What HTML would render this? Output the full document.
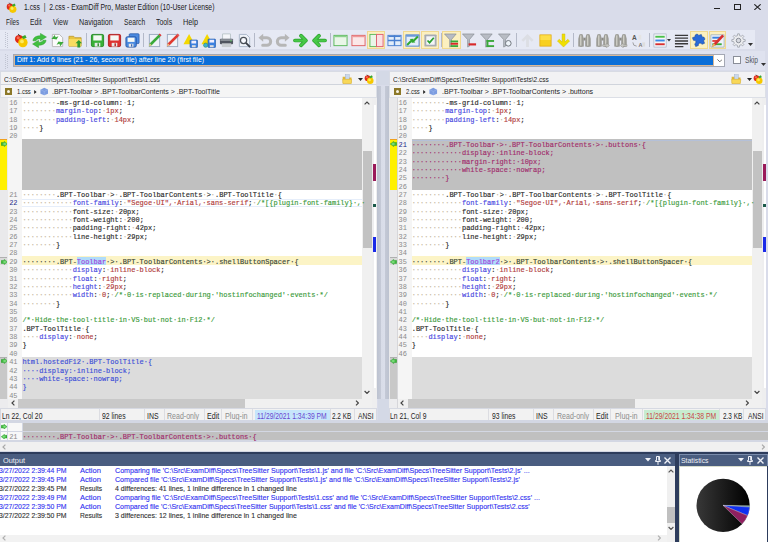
<!DOCTYPE html><html><head><meta charset="utf-8"><style>
*{margin:0;padding:0;box-sizing:border-box}
html,body{width:768px;height:542px;overflow:hidden;background:#d9dcea;position:relative;font-family:"Liberation Sans",sans-serif}
div,span,svg{position:absolute}
span,b,i{position:static}
.t{white-space:nowrap;color:#1e1e1e}
.cl{font-family:"Liberation Mono",monospace;font-size:6.975px;line-height:8.360px;white-space:pre;height:8.360px;margin-top:1.4px;-webkit-text-stroke:0.15px currentColor}
.cl i{font-style:normal;color:#c4b498}
.cl b{font-weight:normal}
.ih{background:#b0dcfa;display:inline-block;height:8.8px;vertical-align:top;margin-top:-1.2px;padding-top:1.2px}
.ln{font-family:"Liberation Mono",monospace;font-size:6.975px;line-height:8.360px;white-space:pre;margin-top:1.4px}
</style></head><body><svg style="left:5.50px;top:2.20px" width="11.50" height="11.50" viewBox="0 0 16 16"><circle cx="5.5" cy="6.5" r="4.5" fill="#e02a18"/><circle cx="4.5" cy="5" r="1.6" fill="#ff8a70" opacity=".7"/><circle cx="9.5" cy="10.2" r="5" fill="#f6c800"/><circle cx="8.5" cy="9" r="2" fill="#fff27a" opacity=".8"/><path d="M8 4 L12 2 L13.5 5 L10 6.5Z" fill="#3aa82a"/><path d="M4.5 1 L6 3" stroke="#333" stroke-width="1"/></svg>
<div class="t" style="left:24.30px;top:2.87px;font-size:8.40px;line-height:9.66px;color:#1a1a1a;transform:scaleX(0.8128);transform-origin:0 0;">1.css &nbsp;|&nbsp; 2.css - ExamDiff Pro, Master Edition (10-User License)</div>
<div style="left:714.20px;top:7.60px;width:5.80px;height:1.10px;background:#222;"></div>
<div style="left:734.3px;top:4px;width:6.6px;height:5.8px;border:1px solid #222;border-top-width:1.6px"></div>
<svg style="left:754.2px;top:3.8px" width="7" height="6.2" viewBox="0 0 7 6.2"><path d="M0.3 0.3 L6.7 5.9 M6.7 0.3 L0.3 5.9" stroke="#222" stroke-width="1.1"/></svg>
<div class="t" style="left:5.90px;top:18.11px;font-size:8.20px;line-height:9.43px;color:#1e1e1e;transform:scaleX(0.7571);transform-origin:0 0;">Files</div>
<div class="t" style="left:30.20px;top:18.11px;font-size:8.20px;line-height:9.43px;color:#1e1e1e;transform:scaleX(0.8271);transform-origin:0 0;">Edit</div>
<div class="t" style="left:53.00px;top:18.11px;font-size:8.20px;line-height:9.43px;color:#1e1e1e;transform:scaleX(0.8508);transform-origin:0 0;">View</div>
<div class="t" style="left:79.00px;top:18.11px;font-size:8.20px;line-height:9.43px;color:#1e1e1e;transform:scaleX(0.8724);transform-origin:0 0;">Navigation</div>
<div class="t" style="left:123.70px;top:18.11px;font-size:8.20px;line-height:9.43px;color:#1e1e1e;transform:scaleX(0.8156);transform-origin:0 0;">Search</div>
<div class="t" style="left:155.90px;top:18.11px;font-size:8.20px;line-height:9.43px;color:#1e1e1e;transform:scaleX(0.8409);transform-origin:0 0;">Tools</div>
<div class="t" style="left:183.00px;top:18.11px;font-size:8.20px;line-height:9.43px;color:#1e1e1e;transform:scaleX(0.8902);transform-origin:0 0;">Help</div>
<div style="left:0.00px;top:30.00px;width:755.00px;height:19.00px;background:#e6e9f4;"></div>
<svg style="left:4.60px;top:32.00px" width="4" height="16" fill="#c0c4d2"><rect x="0" y="0" width="1" height="1"/><rect x="2" y="1" width="1" height="1"/><rect x="0" y="2" width="1" height="1"/><rect x="2" y="3" width="1" height="1"/><rect x="0" y="4" width="1" height="1"/><rect x="2" y="5" width="1" height="1"/><rect x="0" y="6" width="1" height="1"/><rect x="2" y="7" width="1" height="1"/><rect x="0" y="8" width="1" height="1"/><rect x="2" y="9" width="1" height="1"/><rect x="0" y="10" width="1" height="1"/><rect x="2" y="11" width="1" height="1"/><rect x="0" y="12" width="1" height="1"/><rect x="2" y="13" width="1" height="1"/><rect x="0" y="14" width="1" height="1"/><rect x="2" y="15" width="1" height="1"/></svg>
<div style="left:367.10px;top:31px;width:18.30px;height:17.5px;background:#fcf0c0;border:1px solid #f0d890"></div>
<div style="left:403.20px;top:31px;width:17.00px;height:17.5px;background:#fcf0c0;border:1px solid #f0d890"></div>
<div style="left:420.70px;top:31px;width:18.10px;height:17.5px;background:#fcf0c0;border:1px solid #f0d890"></div>
<div style="left:442.20px;top:31px;width:18.60px;height:17.5px;background:#fcf0c0;border:1px solid #f0d890"></div>
<div style="left:690.00px;top:31px;width:17.70px;height:17.5px;background:#fcf0c0;border:1px solid #f0d890"></div>
<div style="left:708.70px;top:31px;width:17.60px;height:17.5px;background:#fcf0c0;border:1px solid #f0d890"></div>
<svg style="left:13.90px;top:32.60px" width="15.00" height="15.00" viewBox="0 0 16 16"><circle cx="5.5" cy="6.5" r="4.5" fill="#e02a18"/><circle cx="4.5" cy="5" r="1.6" fill="#ff8a70" opacity=".7"/><circle cx="9.5" cy="10.2" r="5" fill="#f6c800"/><circle cx="8.5" cy="9" r="2" fill="#fff27a" opacity=".8"/><path d="M8 4 L12 2 L13.5 5 L10 6.5Z" fill="#3aa82a"/><path d="M4.5 1 L6 3" stroke="#333" stroke-width="1"/></svg>
<svg style="left:32.20px;top:32.60px" width="15.00" height="15.00" viewBox="0 0 16 16"><g fill="#40c040" stroke="#2a9a2a" stroke-width=".5" stroke-linejoin="round"><path d="M1 8.3 C1.5 4.8 4 3 9 3 L9 0.4 L15.4 4.3 L9 8.2 L9 6 C6.3 6 4.8 6.8 4.2 8.3 Z"/><path d="M15 7.7 C14.5 11.2 12 13 7 13 L7 15.6 L0.6 11.7 L7 7.8 L7 10 C9.7 10 11.2 9.2 11.8 7.7 Z"/></g></svg>
<svg style="left:50.20px;top:32.60px" width="15.00" height="15.00" viewBox="0 0 16 16"><path d="M2.5 1.5 H10 L13.5 5 V14.5 H2.5Z" fill="#fbfbfb" stroke="#b8b8b8"/><path d="M1.5 6.5 L5 2 L6 4.5 L9 3.5 L7 7 L4 6.5Z" fill="#3caa3c"/><path d="M14.5 9.5 L11 14 L10 11.5 L7 12.5 L9 9 L12 9.5Z" fill="#3caa3c"/></svg>
<svg style="left:67.80px;top:32.60px" width="15.00" height="15.00" viewBox="0 0 16 16"><path d="M1 3.5 H6 L7.5 5 H14 V14 H1Z" fill="#e8c440" stroke="#b8942a" stroke-width=".8"/><path d="M1 6.5 H14 V14 H1Z" fill="#f8dc60"/><path d="M11.5 7.5 L15 11 H13 V15.5 H10 V11 H8Z" fill="#2e9a2e"/></svg>
<svg style="left:89.60px;top:32.60px" width="15.00" height="15.00" viewBox="0 0 16 16"><rect x="1.5" y="1.5" width="13" height="13" rx="1.5" fill="#38b038" stroke="#2a8a2a" stroke-width="1"/><rect x="3.5" y="2.5" width="9" height="5.5" fill="#f4f8f4"/><rect x="5" y="10.5" width="6" height="4" fill="#e8e8e8"/><rect x="8" y="11" width="1.5" height="3" fill="#2a8a2a"/></svg>
<svg style="left:107.30px;top:32.60px" width="15.00" height="15.00" viewBox="0 0 16 16"><rect x="1.5" y="1.5" width="13" height="13" rx="1.5" fill="#dd3030" stroke="#b02020" stroke-width="1"/><rect x="3.5" y="2.5" width="9" height="5.5" fill="#f4f8f4"/><rect x="5" y="10.5" width="6" height="4" fill="#e8e8e8"/><rect x="8" y="11" width="1.5" height="3" fill="#b02020"/></svg>
<svg style="left:124.50px;top:32.60px" width="15.00" height="15.00" viewBox="0 0 16 16"><rect x="4.5" y="0.8" width="10.5" height="10.5" rx="1" fill="#4a8ae0" stroke="#2a5aa8" stroke-width=".8"/><rect x="1" y="4" width="11" height="11" rx="1.5" fill="#4a8ae0" stroke="#2a5aa8" stroke-width="1"/><rect x="2.8" y="5" width="7.4" height="4.5" fill="#f4f8f4"/><rect x="4" y="11.5" width="5" height="3.2" fill="#e8e8e8"/><rect x="6.5" y="12" width="1.2" height="2.5" fill="#2a5aa8"/></svg>
<svg style="left:146.50px;top:32.60px" width="15.00" height="15.00" viewBox="0 0 16 16"><rect x="2.5" y="1.5" width="11" height="13" fill="#eef2f8" stroke="#9aaac0"/><path d="M2 14.5 L3 11 L12.5 1.5 L14.5 3.5 L5 13Z" fill="#3aaa3a"/><path d="M12.5 1.5 L14.5 3.5 L15.5 2.5 L13.5 0.5Z" fill="#e03030"/><path d="M2 14.5 L3 11 L5 13Z" fill="#e8c890"/></svg>
<svg style="left:164.50px;top:32.60px" width="15.00" height="15.00" viewBox="0 0 16 16"><rect x="2.5" y="1.5" width="11" height="13" fill="#eef2f8" stroke="#9aaac0"/><path d="M2 14.5 L3 11 L12.5 1.5 L14.5 3.5 L5 13Z" fill="#e03a30"/><path d="M12.5 1.5 L14.5 3.5 L15.5 2.5 L13.5 0.5Z" fill="#e85050"/><path d="M2 14.5 L3 11 L5 13Z" fill="#e8c890"/></svg>
<svg style="left:183.00px;top:32.60px" width="15.00" height="15.00" viewBox="0 0 16 16"><path d="M6.5 1 L12.5 12 H0.5Z" fill="#f4d800"/><rect x="7.5" y="7.5" width="8" height="8" rx=".8" fill="#3a80e0" stroke="#2458a8" stroke-width=".7"/><rect x="9" y="8.2" width="5" height="3" fill="#eef"/><rect x="9.5" y="13" width="4" height="2.2" fill="#ddd"/></svg>
<svg style="left:201.20px;top:32.60px" width="15.00" height="15.00" viewBox="0 0 16 16"><path d="M6.5 1 L12.5 12 H0.5Z" fill="#f4d800"/><rect x="7.5" y="6.5" width="8" height="9" rx=".8" fill="#3a80e0" stroke="#2458a8" stroke-width=".7"/><rect x="9" y="7.2" width="5" height="3" fill="#eef"/><rect x="9.5" y="13" width="4" height="2.2" fill="#ddd"/><circle cx="5" cy="13" r="2.3" fill="#3cb0d8" stroke="#2a8a50" stroke-width=".6"/></svg>
<svg style="left:218.60px;top:32.60px" width="15.00" height="15.00" viewBox="0 0 16 16"><rect x="4" y="1" width="8" height="6" fill="#f4f6fa" stroke="#9aa" stroke-width=".6"/><rect x="1" y="6" width="14" height="6" rx="1" fill="#505560"/><rect x="1.5" y="6.5" width="13" height="2" fill="#8a9098"/><rect x="3" y="11" width="10" height="4" fill="#c8ccd0"/><rect x="12" y="8" width="1.5" height="1" fill="#4c4"/></svg>
<svg style="left:237.00px;top:32.60px" width="15.00" height="15.00" viewBox="0 0 16 16"><path d="M2.5 1.5 H10 L13.5 5 V14.5 H2.5Z" fill="#eef2f8" stroke="#a8b4c8"/><circle cx="7" cy="8" r="3.3" fill="#f8faff" stroke="#4a5058" stroke-width="1.3"/><path d="M9.5 10.5 L14 15" stroke="#3a3f48" stroke-width="2"/></svg>
<svg style="left:257.80px;top:32.60px" width="15.00" height="15.00" viewBox="0 0 16 16"><path d="M4 5 H9.5 A4 4 0 0 1 9.5 13 H5" fill="none" stroke="#b6b6b6" stroke-width="3.2" stroke-linecap="round"/><path d="M0.5 5 L5.5 0.8 V9.2Z" fill="#b6b6b6"/></svg>
<svg style="left:275.20px;top:32.60px" width="15.00" height="15.00" viewBox="0 0 16 16"><path d="M12 5 H6.5 A4 4 0 0 0 6.5 13 H11" fill="none" stroke="#b6b6b6" stroke-width="3.2" stroke-linecap="round"/><path d="M15.5 5 L10.5 0.8 V9.2Z" fill="#b6b6b6"/></svg>
<svg style="left:293.00px;top:32.60px" width="15.00" height="15.00" viewBox="0 0 16 16"><g fill="none" stroke-linecap="round" stroke-linejoin="round"><path d="M2 8 H13.5 M8.5 2.8 L13.8 8 L8.5 13.2" stroke="#28a028" stroke-width="3.8"/><path d="M2 8 H13.5 M8.5 2.8 L13.8 8 L8.5 13.2" stroke="#48c848" stroke-width="2.4"/></g></svg>
<svg style="left:311.60px;top:32.60px" width="15.00" height="15.00" viewBox="0 0 16 16"><g fill="none" stroke-linecap="round" stroke-linejoin="round"><path d="M14 8 H2.5 M7.5 2.8 L2.2 8 L7.5 13.2" stroke="#28a028" stroke-width="3.8"/><path d="M14 8 H2.5 M7.5 2.8 L2.2 8 L7.5 13.2" stroke="#48c848" stroke-width="2.4"/></g></svg>
<svg style="left:332.80px;top:32.60px" width="15.00" height="15.00" viewBox="0 0 16 16"><rect x="1" y="2.5" width="14" height="11" fill="#eaf6e8" stroke="#58b858" stroke-width="1"/><rect x="1.5" y="3" width="13" height="1.5" fill="#8cd08c"/></svg>
<svg style="left:351.00px;top:32.60px" width="15.00" height="15.00" viewBox="0 0 16 16"><rect x="1" y="2.5" width="14" height="11" fill="#fbe8e8" stroke="#e06060" stroke-width="1"/><rect x="1.5" y="3" width="13" height="1.5" fill="#ee9a9a"/></svg>
<svg style="left:368.80px;top:32.60px" width="15.00" height="15.00" viewBox="0 0 16 16"><rect x="1" y="1.5" width="7" height="13" fill="#eaf6e8" stroke="#58b858"/><rect x="8" y="1.5" width="7" height="13" fill="#fbe0e4" stroke="#e06070"/></svg>
<svg style="left:386.60px;top:32.60px" width="15.00" height="15.00" viewBox="0 0 16 16"><rect x="1" y="2.5" width="14" height="11" fill="#e4eefa" stroke="#4a80d0"/><path d="M1 8 H15 M8 2.5 V13.5" stroke="#4a80d0" stroke-width="1.5"/><rect x="1.5" y="3" width="13" height="1.3" fill="#4a80d0"/></svg>
<svg style="left:404.50px;top:32.60px" width="15.00" height="15.00" viewBox="0 0 16 16"><rect x="1" y="2" width="14" height="12" fill="#e4eefa" stroke="#4a80d0"/><rect x="1.5" y="2.5" width="13" height="1.3" fill="#4a80d0"/><path d="M1.5 12 L6 7.5 L5 6.5 L9 6 L8.5 10 L7.5 9 L3 13.5Z" fill="#30a830"/><path d="M14.5 4.5 L10 9 L11 10 L7 10.5 L7.5 6.5 L8.5 7.5 L13 3Z" fill="#30a830"/></svg>
<svg style="left:422.50px;top:32.60px" width="15.00" height="15.00" viewBox="0 0 16 16"><rect x="1.5" y="1.5" width="13" height="13" rx="1" fill="#a8acb4"/><rect x="3.5" y="3.5" width="9" height="9" fill="#f4f6f8"/><path d="M4.8 8 L7 10.3 L11.5 5" fill="none" stroke="#2aa030" stroke-width="1.8"/></svg>
<svg style="left:444.00px;top:32.60px" width="15.00" height="15.00" viewBox="0 0 16 16"><path d="M0.5 1 H13 L8 7 V14 L6 15 V7Z" fill="#b8bcc4" stroke="#7a8088" stroke-width=".6"/><rect x="7" y="8" width="8" height="2" fill="#3aa83a"/><rect x="7" y="10.5" width="8" height="2" fill="#d82a2a"/><rect x="7" y="13" width="8" height="2" fill="#3aa83a"/></svg>
<svg style="left:462.30px;top:32.60px" width="15.00" height="15.00" viewBox="0 0 16 16"><path d="M0.5 1 H13 L8 7 V14 L6 15 V7Z" fill="#b8bcc4" stroke="#7a8088" stroke-width=".6"/><rect x="7" y="11" width="8" height="2.3" fill="#d82a2a"/></svg>
<svg style="left:480.30px;top:32.60px" width="15.00" height="15.00" viewBox="0 0 16 16"><path d="M0.5 1 H13 L8 7 V14 L6 15 V7Z" fill="#b8bcc4" stroke="#7a8088" stroke-width=".6"/><rect x="7" y="7.5" width="8" height="2" fill="#3aa83a"/><rect x="7" y="13" width="8" height="2" fill="#3aa83a"/><rect x="7" y="7.5" width="2" height="7.5" fill="#3aa83a"/></svg>
<svg style="left:497.80px;top:32.60px" width="15.00" height="15.00" viewBox="0 0 16 16"><path d="M0.5 1 H13 L8 7 V14 L6 15 V7Z" fill="#b8bcc4" stroke="#7a8088" stroke-width=".6"/><circle cx="11" cy="11" r="3" fill="#eef4fa" stroke="#6a7078" stroke-width="1"/></svg>
<svg style="left:519.70px;top:32.60px" width="15.00" height="15.00" viewBox="0 0 16 16"><path d="M8 1 L14.5 7.5 L12.5 9.3 L9.5 6.3 V15 H6.5 V6.3 L3.5 9.3 L1.5 7.5Z" fill="#dcdee4"/></svg>
<svg style="left:537.50px;top:32.60px" width="15.00" height="15.00" viewBox="0 0 16 16"><rect x="2" y="2" width="12" height="12" fill="#f8d020" stroke="#e0a810" stroke-width=".8"/><rect x="2.5" y="2.5" width="11" height="5" fill="#ffe45a" opacity=".7"/></svg>
<svg style="left:555.70px;top:32.60px" width="15.00" height="15.00" viewBox="0 0 16 16"><path d="M8 15 L14.5 8.5 L12.5 6.7 L9.5 9.7 V1 H6.5 V9.7 L3.5 6.7 L1.5 8.5Z" fill="#f0e000" stroke="#d0b800" stroke-width=".5"/></svg>
<svg style="left:576.80px;top:32.60px" width="15.00" height="15.00" viewBox="0 0 16 16"><path d="M2.5 1.5 Q4.3 0.8 6.1 1.5 L7.2 6 L7.3 14.5 Q4.3 15.3 1.3 14.5 L1.4 6Z" fill="#9c9c96"/><rect x="3.4" y="2.5" width="1.3" height="11" fill="#dcdcd4" opacity=".9"/><path d="M9.9 1.5 Q11.7 0.8 13.5 1.5 L14.6 6 L14.7 14.5 Q11.7 15.3 8.7 14.5 L8.8 6Z" fill="#9c9c96"/><rect x="10.8" y="2.5" width="1.3" height="11" fill="#dcdcd4" opacity=".9"/><rect x="7" y="5" width="2" height="3" fill="#8c8c86"/></svg>
<svg style="left:594.80px;top:32.60px" width="15.00" height="15.00" viewBox="0 0 16 16"><path d="M2.5 1.5 Q4.3 0.8 6.1 1.5 L7.2 6 L7.3 14.5 Q4.3 15.3 1.3 14.5 L1.4 6Z" fill="#9c9c96"/><rect x="3.4" y="2.5" width="1.3" height="11" fill="#dcdcd4" opacity=".9"/><path d="M9.9 1.5 Q11.7 0.8 13.5 1.5 L14.6 6 L14.7 14.5 Q11.7 15.3 8.7 14.5 L8.8 6Z" fill="#9c9c96"/><rect x="10.8" y="2.5" width="1.3" height="11" fill="#dcdcd4" opacity=".9"/><rect x="7" y="5" width="2" height="3" fill="#8c8c86"/><path d="M8 12.5 H12 V10.8 L15.5 13.3 L12 15.8 V14.1 H8Z" fill="#c8c8c4" stroke="#8a8a84" stroke-width=".4"/></svg>
<svg style="left:612.70px;top:32.60px" width="15.00" height="15.00" viewBox="0 0 16 16"><path d="M2.5 1.5 Q4.3 0.8 6.1 1.5 L7.2 6 L7.3 14.5 Q4.3 15.3 1.3 14.5 L1.4 6Z" fill="#9c9c96"/><rect x="3.4" y="2.5" width="1.3" height="11" fill="#dcdcd4" opacity=".9"/><path d="M9.9 1.5 Q11.7 0.8 13.5 1.5 L14.6 6 L14.7 14.5 Q11.7 15.3 8.7 14.5 L8.8 6Z" fill="#9c9c96"/><rect x="10.8" y="2.5" width="1.3" height="11" fill="#dcdcd4" opacity=".9"/><rect x="7" y="5" width="2" height="3" fill="#8c8c86"/><path d="M15 12.5 H11 V10.8 L7.5 13.3 L11 15.8 V14.1 H15Z" fill="#c8c8c4" stroke="#8a8a84" stroke-width=".4"/></svg>
<svg style="left:630.60px;top:32.60px" width="15.00" height="15.00" viewBox="0 0 16 16"><text x="1" y="7" font-family="Liberation Sans" font-size="7" font-weight="bold" fill="#555">A</text><text x="8" y="14.5" font-family="Liberation Sans" font-size="6" font-weight="bold" fill="#777">A</text><rect x="12" y="10" width="3" height="4.5" fill="#ddd"/><rect x="8" y="2" width="3" height="5" fill="#e4e4e4"/><path d="M2 10 A4 4 0 0 0 6 14" fill="none" stroke="#888" stroke-width=".8"/></svg>
<svg style="left:652.50px;top:32.60px" width="15.00" height="15.00" viewBox="0 0 16 16"><rect x="1" y="1" width="13" height="14" fill="#f4f6fa" stroke="#98a4b8" stroke-width=".6"/><rect x="2.5" y="3" width="10" height="2" fill="#4ac04a"/><rect x="2.5" y="7" width="10" height="2" fill="#3a8ae8"/><rect x="2.5" y="11" width="10" height="2" fill="#d83030"/></svg>
<svg style="left:673.70px;top:32.60px" width="15.00" height="15.00" viewBox="0 0 16 16"><path d="M1 2.5 H15 M1 5.5 H15 M1 8.5 H15 M1 11.5 H15 M1 14.5 H10" stroke="#3a3a3a" stroke-width="1.5"/></svg>
<svg style="left:691.40px;top:32.60px" width="15.00" height="15.00" viewBox="0 0 16 16"><path d="M3 3 H6 A2 2 0 1 1 10 3 H13 V6 A2 2 0 1 1 13 10 V13 H10 A2 2 0 1 0 6 13 H3 V10 A2 2 0 1 0 3 6Z" fill="#2a6ad8" stroke="#1a4aa0" stroke-width=".6" transform="rotate(-20 8 8)"/></svg>
<svg style="left:709.80px;top:32.60px" width="15.00" height="15.00" viewBox="0 0 16 16"><rect x="1" y="2" width="14" height="13" fill="#eef2fa" stroke="#7890b0" stroke-width=".6"/><rect x="2.5" y="4" width="9" height="2" fill="#3a80e0"/><rect x="2.5" y="7.5" width="7" height="2" fill="#e04040"/><rect x="2.5" y="11" width="10" height="2" fill="#3aaa3a"/><path d="M2 15 L4 11 L13 1.5 L15 3.5 L6 13Z" fill="#d83030"/><path d="M1.5 15.5 L4 11 L6 13Z" fill="#e8b860"/></svg>
<svg style="left:731.00px;top:32.60px" width="15.00" height="15.00" viewBox="0 0 16 16"><path d="M13.17 6.84 L15.14 7.07 L15.14 8.93 L13.17 9.16 L12.48 10.84 L13.71 12.39 L12.39 13.71 L10.84 12.48 L9.16 13.17 L8.93 15.14 L7.07 15.14 L6.84 13.17 L5.16 12.48 L3.61 13.71 L2.29 12.39 L3.52 10.84 L2.83 9.16 L0.86 8.93 L0.86 7.07 L2.83 6.84 L3.52 5.16 L2.29 3.61 L3.61 2.29 L5.16 3.52 L6.84 2.83 L7.07 0.86 L8.93 0.86 L9.16 2.83 L10.84 3.52 L12.39 2.29 L13.71 3.61 L12.48 5.16Z" fill="#ebecef" stroke="#8e939c" stroke-width=".7" stroke-linejoin="round"/><circle cx="8" cy="8" r="2.4" fill="#d8dae0" stroke="#7a7f88" stroke-width=".9"/></svg>
<div style="left:85.60px;top:33.00px;width:1.00px;height:14.00px;background:#b4b9c8;"></div>
<div style="left:142.90px;top:33.00px;width:1.00px;height:14.00px;background:#b4b9c8;"></div>
<div style="left:254.00px;top:33.00px;width:1.00px;height:14.00px;background:#b4b9c8;"></div>
<div style="left:329.50px;top:33.00px;width:1.00px;height:14.00px;background:#b4b9c8;"></div>
<div style="left:440.50px;top:33.00px;width:1.00px;height:14.00px;background:#b4b9c8;"></div>
<div style="left:515.60px;top:33.00px;width:1.00px;height:14.00px;background:#b4b9c8;"></div>
<div style="left:572.90px;top:33.00px;width:1.00px;height:14.00px;background:#b4b9c8;"></div>
<div style="left:649.00px;top:33.00px;width:1.00px;height:14.00px;background:#b4b9c8;"></div>
<svg style="left:666.6px;top:38.5px" width="4" height="3"><path d="M0 0 H4 L2 2.5Z" fill="#333"/></svg>
<svg style="left:748.4px;top:43px" width="5" height="3"><path d="M0 0 H5 L2.5 3Z" fill="#333"/></svg>
<div style="left:0.00px;top:50.70px;width:765.30px;height:19.30px;background:#dfe2ef;"></div>
<svg style="left:4.60px;top:54.00px" width="4" height="15" fill="#c0c4d2"><rect x="0" y="0" width="1" height="1"/><rect x="2" y="1" width="1" height="1"/><rect x="0" y="2" width="1" height="1"/><rect x="2" y="3" width="1" height="1"/><rect x="0" y="4" width="1" height="1"/><rect x="2" y="5" width="1" height="1"/><rect x="0" y="6" width="1" height="1"/><rect x="2" y="7" width="1" height="1"/><rect x="0" y="8" width="1" height="1"/><rect x="2" y="9" width="1" height="1"/><rect x="0" y="10" width="1" height="1"/><rect x="2" y="11" width="1" height="1"/><rect x="0" y="12" width="1" height="1"/><rect x="2" y="13" width="1" height="1"/><rect x="0" y="14" width="1" height="1"/></svg>
<div style="left:12.5px;top:53.5px;width:712px;height:13px;background:#fff;border:1px solid #a4a8b4"></div>
<div style="left:13.5px;top:54.5px;width:700px;height:11.2px;background:#0a6ed8;border:1px solid #d8b898"></div>
<div class="t" style="left:16.80px;top:56.40px;font-size:7.80px;line-height:8.97px;color:#ffffff;transform:scaleX(0.8964);transform-origin:0 0;">Diff 1: Add 6 lines (21 - 26, second file) after line 20 (first file)</div>
<svg style="left:716.6px;top:58.8px" width="5.6" height="3.4"><path d="M0.4 0.4 L2.8 2.8 L5.2 0.4" fill="none" stroke="#606060" stroke-width=".9"/></svg>
<div style="left:733.1px;top:56.4px;width:8px;height:7.2px;background:#fff;border:1px solid #8a8e98"></div>
<div class="t" style="left:744.80px;top:55.63px;font-size:8.60px;line-height:9.89px;color:#555860;transform:scaleX(0.7772);transform-origin:0 0;">Skip</div>
<svg style="left:761.3px;top:63px" width="5" height="3"><path d="M0 0 H5 L2.5 3Z" fill="#333"/></svg>
<div style="left:377.20px;top:71.20px;width:12.10px;height:14.30px;background:#d4d9e6;"></div>
<div style="left:377.2px;top:85.5px;width:12.1px;height:313.4px;background:linear-gradient(90deg,#bcc2d0 0,#c4c9d6 3.5px,#d8dce8 4px,#dadeea 7.5px,#c4c9d6 8px,#bcc2d0 12.1px)"></div>
<div style="left:377.70px;top:398.90px;width:11.10px;height:22.30px;background:#d4d9e6;"></div>
<div style="left:0.00px;top:71px;width:377.20px;height:14.3px;background:#f2f2f4;border:1px solid #d8dbe4;border-bottom-color:#d0d4dc"></div>
<div class="t" style="left:3.90px;top:74.56px;font-size:8.00px;line-height:9.20px;color:#1e1e1e;transform:scaleX(0.8193);transform-origin:0 0;">C:\Src\ExamDiff\Specs\TreeSitter Support\Tests\1.css</div>
<svg style="left:341.70px;top:73.80px" width="10.50" height="10.50" viewBox="0 0 16 16"><path d="M1 4 H6 L7.5 5.5 H14.5 V14.5 H1Z" fill="#e0b838"/><rect x="5" y="1" width="6" height="7" fill="#c8d8ec" stroke="#98a8c0" stroke-width=".6"/><path d="M1 8 H15 L14 14.5 H1.5Z" fill="#f8d858" stroke="#d0a830" stroke-width=".6"/></svg>
<svg style="left:357.70px;top:78.2px" width="5" height="3"><path d="M0 0 H5 L2.5 3Z" fill="#222"/></svg>
<svg style="left:364.00px;top:73.80px" width="10.50" height="10.50" viewBox="0 0 16 16"><circle cx="5.5" cy="6.5" r="4.5" fill="#e02a18"/><circle cx="4.5" cy="5" r="1.6" fill="#ff8a70" opacity=".7"/><circle cx="9.5" cy="10.2" r="5" fill="#f6c800"/><circle cx="8.5" cy="9" r="2" fill="#fff27a" opacity=".8"/><path d="M8 4 L12 2 L13.5 5 L10 6.5Z" fill="#3aa82a"/><path d="M4.5 1 L6 3" stroke="#333" stroke-width="1"/></svg>
<div style="left:0.00px;top:85.2px;width:377.20px;height:12.4px;background:#f5f5f5;border:1px solid #dcdfe6;border-top:none"></div>
<svg style="left:4.60px;top:87.6px" width="7" height="7" viewBox="0 0 7 7"><rect x="0" y="0" width="7" height="7" fill="#8c7828"/><circle cx="3.5" cy="3.5" r="1.5" fill="#f8f4e8"/></svg>
<div class="t" style="left:16.50px;top:88.24px;font-size:7.60px;line-height:8.74px;color:#1e1e1e;transform:scaleX(0.7776);transform-origin:0 0;">1.css</div>
<svg style="left:33.60px;top:89.6px" width="3" height="4"><path d="M0.2 0 L2.6 2 L0.2 4Z" fill="#222"/></svg>
<svg style="left:39.80px;top:86.6px" width="8.5" height="9" viewBox="0 0 10 10"><path d="M5 0.5 L9.5 2.8 V7.5 L5 9.5 L0.5 7.5 V2.8Z" fill="#7c9ce0"/><path d="M0.5 2.8 L5 5 L9.5 2.8 M5 5 V9.5" stroke="#a8c0f0" stroke-width=".5" fill="none"/></svg>
<div class="t" style="left:52.20px;top:88.24px;font-size:7.60px;line-height:8.74px;color:#1e1e1e;transform:scaleX(0.9205);transform-origin:0 0;">.BPT-Toolbar &gt; .BPT-ToolbarContents &gt; .BPT-ToolTitle</div>
<div style="left:389.30px;top:71px;width:377.20px;height:14.3px;background:#f2f2f4;border:1px solid #d8dbe4;border-bottom-color:#d0d4dc"></div>
<div class="t" style="left:393.20px;top:74.56px;font-size:8.00px;line-height:9.20px;color:#1e1e1e;transform:scaleX(0.8193);transform-origin:0 0;">C:\Src\ExamDiff\Specs\TreeSitter Support\Tests\2.css</div>
<svg style="left:731.00px;top:73.80px" width="10.50" height="10.50" viewBox="0 0 16 16"><path d="M1 4 H6 L7.5 5.5 H14.5 V14.5 H1Z" fill="#e0b838"/><rect x="5" y="1" width="6" height="7" fill="#c8d8ec" stroke="#98a8c0" stroke-width=".6"/><path d="M1 8 H15 L14 14.5 H1.5Z" fill="#f8d858" stroke="#d0a830" stroke-width=".6"/></svg>
<svg style="left:747.00px;top:78.2px" width="5" height="3"><path d="M0 0 H5 L2.5 3Z" fill="#222"/></svg>
<svg style="left:753.30px;top:73.80px" width="10.50" height="10.50" viewBox="0 0 16 16"><circle cx="5.5" cy="6.5" r="4.5" fill="#e02a18"/><circle cx="4.5" cy="5" r="1.6" fill="#ff8a70" opacity=".7"/><circle cx="9.5" cy="10.2" r="5" fill="#f6c800"/><circle cx="8.5" cy="9" r="2" fill="#fff27a" opacity=".8"/><path d="M8 4 L12 2 L13.5 5 L10 6.5Z" fill="#3aa82a"/><path d="M4.5 1 L6 3" stroke="#333" stroke-width="1"/></svg>
<div style="left:389.30px;top:85.2px;width:377.20px;height:12.4px;background:#f5f5f5;border:1px solid #dcdfe6;border-top:none"></div>
<svg style="left:393.90px;top:87.6px" width="7" height="7" viewBox="0 0 7 7"><rect x="0" y="0" width="7" height="7" fill="#8c7828"/><circle cx="3.5" cy="3.5" r="1.5" fill="#f8f4e8"/></svg>
<div class="t" style="left:405.80px;top:88.24px;font-size:7.60px;line-height:8.74px;color:#1e1e1e;transform:scaleX(0.7776);transform-origin:0 0;">2.css</div>
<svg style="left:422.90px;top:89.6px" width="3" height="4"><path d="M0.2 0 L2.6 2 L0.2 4Z" fill="#222"/></svg>
<svg style="left:429.10px;top:86.6px" width="8.5" height="9" viewBox="0 0 10 10"><path d="M5 0.5 L9.5 2.8 V7.5 L5 9.5 L0.5 7.5 V2.8Z" fill="#7c9ce0"/><path d="M0.5 2.8 L5 5 L9.5 2.8 M5 5 V9.5" stroke="#a8c0f0" stroke-width=".5" fill="none"/></svg>
<div class="t" style="left:441.50px;top:88.24px;font-size:7.60px;line-height:8.74px;color:#1e1e1e;transform:scaleX(0.9297);transform-origin:0 0;">.BPT-Toolbar &gt; .BPT-ToolbarContents &gt; .buttons</div>
<div style="left:0.00px;top:97.50px;width:7.50px;height:301.00px;background:#e9e9eb;"></div>
<div style="left:7.50px;top:97.50px;width:0.90px;height:301.00px;background:#d6d6da;"></div>
<div style="left:8.40px;top:97.50px;width:14.00px;height:301.00px;background:#f5f5f5;"></div>
<div style="left:22.40px;top:97.50px;width:340.00px;height:301.00px;background:#ffffff;"></div>
<div style="left:0.30px;top:139.40px;width:7.20px;height:50.16px;background:#fff000;border-top:1px solid #f0a020"></div>
<svg style="left:0.60px;top:141.10px" width="6.90" height="6.00" viewBox="0 0 10 8"><defs><radialGradient id="ga" cx=".55" cy=".5" r=".5"><stop offset="0" stop-color="#8ee88e"/><stop offset="1" stop-color="#28a828"/></radialGradient></defs><path d="M0.4 1.8 H4.6 V0.2 L9.7 4 L4.6 7.8 V6.2 H0.4Z" fill="url(#ga)" stroke="#229a22" stroke-width=".6" stroke-linejoin="round"/></svg>
<div style="left:0.30px;top:257.04px;width:7.20px;height:8.36px;background:#dadada;border-top:1px solid #b0b0b0"></div>
<svg style="left:0.60px;top:258.74px" width="6.90" height="6.00" viewBox="0 0 10 8"><defs><radialGradient id="ga" cx=".55" cy=".5" r=".5"><stop offset="0" stop-color="#8ee88e"/><stop offset="1" stop-color="#28a828"/></radialGradient></defs><path d="M0.4 1.8 H4.6 V0.2 L9.7 4 L4.6 7.8 V6.2 H0.4Z" fill="url(#ga)" stroke="#229a22" stroke-width=".6" stroke-linejoin="round"/></svg>
<div style="left:0.30px;top:356.76px;width:7.20px;height:41.80px;background:#c8c8c8;border-top:1px solid #b0b0b0"></div>
<svg style="left:0.60px;top:358.46px" width="6.90" height="6.00" viewBox="0 0 10 8"><defs><radialGradient id="ga" cx=".55" cy=".5" r=".5"><stop offset="0" stop-color="#8ee88e"/><stop offset="1" stop-color="#28a828"/></radialGradient></defs><path d="M0.4 1.8 H4.6 V0.2 L9.7 4 L4.6 7.8 V6.2 H0.4Z" fill="url(#ga)" stroke="#229a22" stroke-width=".6" stroke-linejoin="round"/></svg>
<div style="left:362.40px;top:97.50px;width:9.80px;height:301.00px;background:#f0f0f0;"></div>
<div style="left:362.90px;top:150.60px;width:8.90px;height:97.40px;background:#c2c2c2;"></div>
<svg style="left:364.40px;top:101.10px" width="6" height="4"><path d="M0.6 3.4 L3 1 L5.4 3.4" fill="none" stroke="#444" stroke-width="1.2"/></svg>
<svg style="left:364.40px;top:390.40px" width="6" height="4"><path d="M0.6 1 L3 3.4 L5.4 1" fill="none" stroke="#444" stroke-width="1.2"/></svg>
<div style="left:372.20px;top:97.50px;width:5.00px;height:310.00px;background:#eeeeef;"></div>
<div style="left:373.50px;top:104.50px;width:2.70px;height:283.50px;background:#ffffff;"></div>
<div style="left:373.40px;top:164.00px;width:2.90px;height:17.00px;background:#9a1a5a;"></div>
<div style="left:373.40px;top:204.00px;width:2.90px;height:2.50px;background:#1a5a4a;"></div>
<div style="left:373.40px;top:237.30px;width:2.90px;height:14.50px;background:#1a2ae8;"></div>
<div style="left:0.00px;top:398.50px;width:7.50px;height:9.50px;background:#ececee;"></div>
<div style="left:7.50px;top:398.50px;width:0.90px;height:9.50px;background:#d6d6da;"></div>
<div style="left:8.40px;top:398.50px;width:354.00px;height:9.50px;background:#f0f0f0;"></div>
<div style="left:18.40px;top:399.00px;width:227.00px;height:8.60px;background:#c8c8c8;"></div>
<svg style="left:10.70px;top:400.20px" width="4" height="6"><path d="M3.4 0.6 L1 3 L3.4 5.4" fill="none" stroke="#444" stroke-width="1.2"/></svg>
<svg style="left:355.30px;top:400.20px" width="4" height="6"><path d="M1 0.6 L3.4 3 L1 5.4" fill="none" stroke="#444" stroke-width="1.2"/></svg>
<div style="left:362.40px;top:398.50px;width:9.80px;height:9.50px;background:#f0f0f0;"></div>
<div style="left:389.30px;top:97.50px;width:7.50px;height:301.00px;background:#e9e9eb;"></div>
<div style="left:396.80px;top:97.50px;width:0.90px;height:301.00px;background:#d6d6da;"></div>
<div style="left:397.70px;top:97.50px;width:14.00px;height:301.00px;background:#f5f5f5;"></div>
<div style="left:411.70px;top:97.50px;width:340.70px;height:301.00px;background:#ffffff;"></div>
<div style="left:389.60px;top:139.40px;width:7.20px;height:50.16px;background:#fff000;border-top:1px solid #f0a020"></div>
<svg style="left:389.70px;top:141.10px" width="6.90" height="6.00" viewBox="0 0 10 8"><defs><radialGradient id="gb" cx=".45" cy=".5" r=".5"><stop offset="0" stop-color="#8ee88e"/><stop offset="1" stop-color="#28a828"/></radialGradient></defs><path d="M9.6 1.8 H5.4 V0.2 L0.3 4 L5.4 7.8 V6.2 H9.6Z" fill="url(#gb)" stroke="#229a22" stroke-width=".6" stroke-linejoin="round"/></svg>
<div style="left:389.60px;top:257.04px;width:7.20px;height:8.36px;background:#dadada;border-top:1px solid #b0b0b0"></div>
<svg style="left:389.70px;top:258.74px" width="6.90" height="6.00" viewBox="0 0 10 8"><defs><radialGradient id="gb" cx=".45" cy=".5" r=".5"><stop offset="0" stop-color="#8ee88e"/><stop offset="1" stop-color="#28a828"/></radialGradient></defs><path d="M9.6 1.8 H5.4 V0.2 L0.3 4 L5.4 7.8 V6.2 H9.6Z" fill="url(#gb)" stroke="#229a22" stroke-width=".6" stroke-linejoin="round"/></svg>
<div style="left:389.60px;top:356.76px;width:7.20px;height:41.80px;background:#c8c8c8;border-top:1px solid #b0b0b0"></div>
<svg style="left:389.70px;top:358.46px" width="6.90" height="6.00" viewBox="0 0 10 8"><defs><radialGradient id="gb" cx=".45" cy=".5" r=".5"><stop offset="0" stop-color="#8ee88e"/><stop offset="1" stop-color="#28a828"/></radialGradient></defs><path d="M9.6 1.8 H5.4 V0.2 L0.3 4 L5.4 7.8 V6.2 H9.6Z" fill="url(#gb)" stroke="#229a22" stroke-width=".6" stroke-linejoin="round"/></svg>
<div style="left:752.40px;top:97.50px;width:9.80px;height:301.00px;background:#f0f0f0;"></div>
<div style="left:752.90px;top:150.60px;width:8.90px;height:97.40px;background:#c2c2c2;"></div>
<svg style="left:754.40px;top:101.10px" width="6" height="4"><path d="M0.6 3.4 L3 1 L5.4 3.4" fill="none" stroke="#444" stroke-width="1.2"/></svg>
<svg style="left:754.40px;top:390.40px" width="6" height="4"><path d="M0.6 1 L3 3.4 L5.4 1" fill="none" stroke="#444" stroke-width="1.2"/></svg>
<div style="left:762.20px;top:97.50px;width:4.30px;height:310.00px;background:#eeeeef;"></div>
<div style="left:763.50px;top:104.50px;width:2.70px;height:283.50px;background:#ffffff;"></div>
<div style="left:763.40px;top:164.00px;width:2.90px;height:17.00px;background:#9a1a5a;"></div>
<div style="left:763.40px;top:204.00px;width:2.90px;height:2.50px;background:#1a5a4a;"></div>
<div style="left:763.40px;top:237.30px;width:2.90px;height:14.50px;background:#1a2ae8;"></div>
<div style="left:389.30px;top:398.50px;width:7.50px;height:9.50px;background:#ececee;"></div>
<div style="left:396.80px;top:398.50px;width:0.90px;height:9.50px;background:#d6d6da;"></div>
<div style="left:397.70px;top:398.50px;width:354.70px;height:9.50px;background:#f0f0f0;"></div>
<div style="left:407.70px;top:399.00px;width:227.00px;height:8.60px;background:#c8c8c8;"></div>
<svg style="left:400.00px;top:400.20px" width="4" height="6"><path d="M3.4 0.6 L1 3 L3.4 5.4" fill="none" stroke="#444" stroke-width="1.2"/></svg>
<svg style="left:745.30px;top:400.20px" width="4" height="6"><path d="M1 0.6 L3.4 3 L1 5.4" fill="none" stroke="#444" stroke-width="1.2"/></svg>
<div style="left:752.40px;top:398.50px;width:9.80px;height:9.50px;background:#f0f0f0;"></div>
<div class="lbg" style="left:22.40px;top:139.40px;width:340.00px;height:8.410px;background:#c0c0c0"></div>
<div class="lbg" style="left:22.40px;top:147.76px;width:340.00px;height:8.410px;background:#c0c0c0"></div>
<div class="lbg" style="left:22.40px;top:156.12px;width:340.00px;height:8.410px;background:#c0c0c0"></div>
<div class="lbg" style="left:22.40px;top:164.48px;width:340.00px;height:8.410px;background:#c0c0c0"></div>
<div class="lbg" style="left:22.40px;top:172.84px;width:340.00px;height:8.410px;background:#c0c0c0"></div>
<div class="lbg" style="left:22.40px;top:181.20px;width:340.00px;height:8.410px;background:#c0c0c0"></div>
<div class="lbg" style="left:22.40px;top:198.52px;width:340.00px;height:8.660px;border-top:1px solid #e6eefa;border-bottom:1px solid #e6eefa;box-sizing:border-box"></div>
<div class="lbg" style="left:22.40px;top:256.44px;width:340.00px;height:8.410px;background:#fcf4c6"></div>
<div class="lbg" style="left:22.40px;top:356.76px;width:340.00px;height:8.410px;background:#dcdcdc"></div>
<div class="lbg" style="left:22.40px;top:365.12px;width:340.00px;height:8.410px;background:#dcdcdc"></div>
<div class="lbg" style="left:22.40px;top:373.48px;width:340.00px;height:8.410px;background:#dcdcdc"></div>
<div class="lbg" style="left:22.40px;top:381.84px;width:340.00px;height:8.410px;background:#dcdcdc"></div>
<div class="lbg" style="left:22.40px;top:390.20px;width:340.00px;height:8.410px;background:#dcdcdc"></div>
<div class="ln" style="left:9.20px;top:97.60px;color:#8a8a8a">16</div>
<div class="cl" style="left:22.40px;top:97.60px"><i>·</i><i>·</i><i>·</i><i>·</i><i>·</i><i>·</i><i>·</i><i>·</i><span style="color:#2a2a2a">-</span><span style="color:#2a2a2a">m</span><span style="color:#2a2a2a">s</span><span style="color:#2a2a2a">-</span><span style="color:#2a2a2a">g</span><span style="color:#2a2a2a">r</span><span style="color:#2a2a2a">i</span><span style="color:#2a2a2a">d</span><span style="color:#2a2a2a">-</span><span style="color:#2a2a2a">c</span><span style="color:#2a2a2a">o</span><span style="color:#2a2a2a">l</span><span style="color:#2a2a2a">u</span><span style="color:#2a2a2a">m</span><span style="color:#2a2a2a">n</span><span style="color:#2a2a2a">:</span><i>·</i><span style="color:#2a2a2a">1</span><span style="color:#2a2a2a">;</span></div>
<div class="ln" style="left:9.20px;top:105.96px;color:#8a8a8a">17</div>
<div class="cl" style="left:22.40px;top:105.96px"><i>·</i><i>·</i><i>·</i><i>·</i><i>·</i><i>·</i><i>·</i><i>·</i><span style="color:#4646e0">margin-top</span><span style="color:#2a2a2a">:</span><i>·</i><span style="color:#b03a3a">1px</span><span style="color:#2a2a2a">;</span></div>
<div class="ln" style="left:9.20px;top:114.32px;color:#8a8a8a">18</div>
<div class="cl" style="left:22.40px;top:114.32px"><i>·</i><i>·</i><i>·</i><i>·</i><i>·</i><i>·</i><i>·</i><i>·</i><span style="color:#4646e0">padding-left</span><span style="color:#2a2a2a">:</span><i>·</i><span style="color:#b03a3a">14px</span><span style="color:#2a2a2a">;</span></div>
<div class="ln" style="left:9.20px;top:122.68px;color:#8a8a8a">19</div>
<div class="cl" style="left:22.40px;top:122.68px"><i>·</i><i>·</i><i>·</i><i>·</i><span style="color:#2a2a2a">}</span></div>
<div class="ln" style="left:9.20px;top:131.04px;color:#8a8a8a">20</div>
<div class="ln" style="left:9.20px;top:189.56px;color:#8a8a8a">21</div>
<div class="cl" style="left:22.40px;top:189.56px"><i>·</i><i>·</i><i>·</i><i>·</i><i>·</i><i>·</i><i>·</i><i>·</i><span style="color:#2a2a2a">.</span><span style="color:#2a2a2a">B</span><span style="color:#2a2a2a">P</span><span style="color:#2a2a2a">T</span><span style="color:#2a2a2a">-</span><span style="color:#2a2a2a">T</span><span style="color:#2a2a2a">o</span><span style="color:#2a2a2a">o</span><span style="color:#2a2a2a">l</span><span style="color:#2a2a2a">b</span><span style="color:#2a2a2a">a</span><span style="color:#2a2a2a">r</span><i>·</i><span style="color:#2a2a2a">&gt;</span><i>·</i><span style="color:#2a2a2a">.</span><span style="color:#2a2a2a">B</span><span style="color:#2a2a2a">P</span><span style="color:#2a2a2a">T</span><span style="color:#2a2a2a">-</span><span style="color:#2a2a2a">T</span><span style="color:#2a2a2a">o</span><span style="color:#2a2a2a">o</span><span style="color:#2a2a2a">l</span><span style="color:#2a2a2a">b</span><span style="color:#2a2a2a">a</span><span style="color:#2a2a2a">r</span><span style="color:#2a2a2a">C</span><span style="color:#2a2a2a">o</span><span style="color:#2a2a2a">n</span><span style="color:#2a2a2a">t</span><span style="color:#2a2a2a">e</span><span style="color:#2a2a2a">n</span><span style="color:#2a2a2a">t</span><span style="color:#2a2a2a">s</span><i>·</i><span style="color:#2a2a2a">&gt;</span><i>·</i><span style="color:#2a2a2a">.</span><span style="color:#2a2a2a">B</span><span style="color:#2a2a2a">P</span><span style="color:#2a2a2a">T</span><span style="color:#2a2a2a">-</span><span style="color:#2a2a2a">T</span><span style="color:#2a2a2a">o</span><span style="color:#2a2a2a">o</span><span style="color:#2a2a2a">l</span><span style="color:#2a2a2a">T</span><span style="color:#2a2a2a">i</span><span style="color:#2a2a2a">t</span><span style="color:#2a2a2a">l</span><span style="color:#2a2a2a">e</span><i>·</i><span style="color:#2a2a2a">{</span></div>
<div class="ln" style="left:9.20px;top:197.92px;color:#1e2a88">22</div>
<div class="cl" style="left:22.40px;top:197.92px"><i>·</i><i>·</i><i>·</i><i>·</i><i>·</i><i>·</i><i>·</i><i>·</i><i>·</i><i>·</i><i>·</i><i>·</i><span style="color:#4646e0">font-family</span><span style="color:#2a2a2a">:</span><i>·</i><span style="color:#b03a3a">&quot;Segoe</span><span style="color:#b03a3a">·</span><span style="color:#b03a3a">UI&quot;,</span><span style="color:#b03a3a">·</span><span style="color:#b03a3a">Arial,</span><span style="color:#b03a3a">·</span><span style="color:#b03a3a">sans-serif</span><span style="color:#2a2a2a">;</span><i>·</i><span style="color:#3a9a3a">/*[{plugin-font-family}</span><span style="color:#3a9a3a">·</span><span style="color:#3a9a3a">,</span><span style="color:#3a9a3a">·</span></div>
<div class="ln" style="left:9.20px;top:206.28px;color:#8a8a8a">23</div>
<div class="cl" style="left:22.40px;top:206.28px"><i>·</i><i>·</i><i>·</i><i>·</i><i>·</i><i>·</i><i>·</i><i>·</i><i>·</i><i>·</i><i>·</i><i>·</i><span style="color:#2a2a2a">f</span><span style="color:#2a2a2a">o</span><span style="color:#2a2a2a">n</span><span style="color:#2a2a2a">t</span><span style="color:#2a2a2a">-</span><span style="color:#2a2a2a">s</span><span style="color:#2a2a2a">i</span><span style="color:#2a2a2a">z</span><span style="color:#2a2a2a">e</span><span style="color:#2a2a2a">:</span><i>·</i><span style="color:#2a2a2a">2</span><span style="color:#2a2a2a">0</span><span style="color:#2a2a2a">p</span><span style="color:#2a2a2a">x</span><span style="color:#2a2a2a">;</span></div>
<div class="ln" style="left:9.20px;top:214.64px;color:#8a8a8a">24</div>
<div class="cl" style="left:22.40px;top:214.64px"><i>·</i><i>·</i><i>·</i><i>·</i><i>·</i><i>·</i><i>·</i><i>·</i><i>·</i><i>·</i><i>·</i><i>·</i><span style="color:#2a2a2a">f</span><span style="color:#2a2a2a">o</span><span style="color:#2a2a2a">n</span><span style="color:#2a2a2a">t</span><span style="color:#2a2a2a">-</span><span style="color:#2a2a2a">w</span><span style="color:#2a2a2a">e</span><span style="color:#2a2a2a">i</span><span style="color:#2a2a2a">g</span><span style="color:#2a2a2a">h</span><span style="color:#2a2a2a">t</span><span style="color:#2a2a2a">:</span><i>·</i><span style="color:#2a2a2a">2</span><span style="color:#2a2a2a">0</span><span style="color:#2a2a2a">0</span><span style="color:#2a2a2a">;</span></div>
<div class="ln" style="left:9.20px;top:223.00px;color:#8a8a8a">25</div>
<div class="cl" style="left:22.40px;top:223.00px"><i>·</i><i>·</i><i>·</i><i>·</i><i>·</i><i>·</i><i>·</i><i>·</i><i>·</i><i>·</i><i>·</i><i>·</i><span style="color:#2a2a2a">p</span><span style="color:#2a2a2a">a</span><span style="color:#2a2a2a">d</span><span style="color:#2a2a2a">d</span><span style="color:#2a2a2a">i</span><span style="color:#2a2a2a">n</span><span style="color:#2a2a2a">g</span><span style="color:#2a2a2a">-</span><span style="color:#2a2a2a">r</span><span style="color:#2a2a2a">i</span><span style="color:#2a2a2a">g</span><span style="color:#2a2a2a">h</span><span style="color:#2a2a2a">t</span><span style="color:#2a2a2a">:</span><i>·</i><span style="color:#2a2a2a">4</span><span style="color:#2a2a2a">2</span><span style="color:#2a2a2a">p</span><span style="color:#2a2a2a">x</span><span style="color:#2a2a2a">;</span></div>
<div class="ln" style="left:9.20px;top:231.36px;color:#8a8a8a">26</div>
<div class="cl" style="left:22.40px;top:231.36px"><i>·</i><i>·</i><i>·</i><i>·</i><i>·</i><i>·</i><i>·</i><i>·</i><i>·</i><i>·</i><i>·</i><i>·</i><span style="color:#2a2a2a">l</span><span style="color:#2a2a2a">i</span><span style="color:#2a2a2a">n</span><span style="color:#2a2a2a">e</span><span style="color:#2a2a2a">-</span><span style="color:#2a2a2a">h</span><span style="color:#2a2a2a">e</span><span style="color:#2a2a2a">i</span><span style="color:#2a2a2a">g</span><span style="color:#2a2a2a">h</span><span style="color:#2a2a2a">t</span><span style="color:#2a2a2a">:</span><i>·</i><span style="color:#2a2a2a">2</span><span style="color:#2a2a2a">9</span><span style="color:#2a2a2a">p</span><span style="color:#2a2a2a">x</span><span style="color:#2a2a2a">;</span></div>
<div class="ln" style="left:9.20px;top:239.72px;color:#8a8a8a">27</div>
<div class="cl" style="left:22.40px;top:239.72px"><i>·</i><i>·</i><i>·</i><i>·</i><i>·</i><i>·</i><i>·</i><i>·</i><span style="color:#2a2a2a">}</span></div>
<div class="ln" style="left:9.20px;top:248.08px;color:#8a8a8a">28</div>
<div class="ln" style="left:9.20px;top:256.44px;color:#8a8a8a">29</div>
<div class="cl" style="left:22.40px;top:256.44px"><span style="color:#3a4838">·</span><span style="color:#3a4838">·</span><span style="color:#3a4838">·</span><span style="color:#3a4838">·</span><span style="color:#3a4838">·</span><span style="color:#3a4838">·</span><span style="color:#3a4838">·</span><span style="color:#3a4838">·</span><span style="color:#3a4838">.</span><span style="color:#3a4838">B</span><span style="color:#3a4838">P</span><span style="color:#3a4838">T</span><span style="color:#3a4838">-</span><b class="ih"><span style="color:#a046dc">Toolbar</span></b><span style="color:#3a4838">·</span><span style="color:#3a4838">&gt;</span><span style="color:#3a4838">·</span><span style="color:#3a4838">.</span><span style="color:#3a4838">B</span><span style="color:#3a4838">P</span><span style="color:#3a4838">T</span><span style="color:#3a4838">-</span><span style="color:#3a4838">T</span><span style="color:#3a4838">o</span><span style="color:#3a4838">o</span><span style="color:#3a4838">l</span><span style="color:#3a4838">b</span><span style="color:#3a4838">a</span><span style="color:#3a4838">r</span><span style="color:#3a4838">C</span><span style="color:#3a4838">o</span><span style="color:#3a4838">n</span><span style="color:#3a4838">t</span><span style="color:#3a4838">e</span><span style="color:#3a4838">n</span><span style="color:#3a4838">t</span><span style="color:#3a4838">s</span><span style="color:#3a4838">·</span><span style="color:#3a4838">&gt;</span><span style="color:#3a4838">·</span><span style="color:#3a4838">.</span><span style="color:#3a4838">s</span><span style="color:#3a4838">h</span><span style="color:#3a4838">e</span><span style="color:#3a4838">l</span><span style="color:#3a4838">l</span><span style="color:#3a4838">B</span><span style="color:#3a4838">u</span><span style="color:#3a4838">t</span><span style="color:#3a4838">t</span><span style="color:#3a4838">o</span><span style="color:#3a4838">n</span><span style="color:#3a4838">S</span><span style="color:#3a4838">p</span><span style="color:#3a4838">a</span><span style="color:#3a4838">c</span><span style="color:#3a4838">e</span><span style="color:#3a4838">r</span><span style="color:#3a4838">·</span><span style="color:#3a4838">{</span></div>
<div class="ln" style="left:9.20px;top:264.80px;color:#8a8a8a">30</div>
<div class="cl" style="left:22.40px;top:264.80px"><i>·</i><i>·</i><i>·</i><i>·</i><i>·</i><i>·</i><i>·</i><i>·</i><i>·</i><i>·</i><i>·</i><i>·</i><span style="color:#4646e0">display</span><span style="color:#2a2a2a">:</span><i>·</i><span style="color:#b03a3a">inline-block</span><span style="color:#2a2a2a">;</span></div>
<div class="ln" style="left:9.20px;top:273.16px;color:#8a8a8a">31</div>
<div class="cl" style="left:22.40px;top:273.16px"><i>·</i><i>·</i><i>·</i><i>·</i><i>·</i><i>·</i><i>·</i><i>·</i><i>·</i><i>·</i><i>·</i><i>·</i><span style="color:#4646e0">float</span><span style="color:#2a2a2a">:</span><i>·</i><span style="color:#b03a3a">right</span><span style="color:#2a2a2a">;</span></div>
<div class="ln" style="left:9.20px;top:281.52px;color:#8a8a8a">32</div>
<div class="cl" style="left:22.40px;top:281.52px"><i>·</i><i>·</i><i>·</i><i>·</i><i>·</i><i>·</i><i>·</i><i>·</i><i>·</i><i>·</i><i>·</i><i>·</i><span style="color:#4646e0">height</span><span style="color:#2a2a2a">:</span><i>·</i><span style="color:#b03a3a">29px</span><span style="color:#2a2a2a">;</span></div>
<div class="ln" style="left:9.20px;top:289.88px;color:#8a8a8a">33</div>
<div class="cl" style="left:22.40px;top:289.88px"><i>·</i><i>·</i><i>·</i><i>·</i><i>·</i><i>·</i><i>·</i><i>·</i><i>·</i><i>·</i><i>·</i><i>·</i><span style="color:#4646e0">width</span><span style="color:#2a2a2a">:</span><i>·</i><span style="color:#b03a3a">0</span><span style="color:#2a2a2a">;</span><i>·</i><span style="color:#3a9a3a">/*</span><span style="color:#3a9a3a">·</span><span style="color:#3a9a3a">0</span><span style="color:#3a9a3a">·</span><span style="color:#3a9a3a">is</span><span style="color:#3a9a3a">·</span><span style="color:#3a9a3a">replaced</span><span style="color:#3a9a3a">·</span><span style="color:#3a9a3a">during</span><span style="color:#3a9a3a">·</span><span style="color:#3a9a3a">&#x27;hostinfochanged&#x27;</span><span style="color:#3a9a3a">·</span><span style="color:#3a9a3a">events</span><span style="color:#3a9a3a">·</span><span style="color:#3a9a3a">*/</span></div>
<div class="ln" style="left:9.20px;top:298.24px;color:#8a8a8a">34</div>
<div class="cl" style="left:22.40px;top:298.24px"><i>·</i><i>·</i><i>·</i><i>·</i><i>·</i><i>·</i><i>·</i><i>·</i><span style="color:#2a2a2a">}</span></div>
<div class="ln" style="left:9.20px;top:306.60px;color:#8a8a8a">35</div>
<div class="ln" style="left:9.20px;top:314.96px;color:#8a8a8a">36</div>
<div class="cl" style="left:22.40px;top:314.96px"><span style="color:#3a9a3a">/*</span><span style="color:#3a9a3a">·</span><span style="color:#3a9a3a">Hide</span><span style="color:#3a9a3a">·</span><span style="color:#3a9a3a">the</span><span style="color:#3a9a3a">·</span><span style="color:#3a9a3a">tool</span><span style="color:#3a9a3a">·</span><span style="color:#3a9a3a">title</span><span style="color:#3a9a3a">·</span><span style="color:#3a9a3a">in</span><span style="color:#3a9a3a">·</span><span style="color:#3a9a3a">VS</span><span style="color:#3a9a3a">·</span><span style="color:#3a9a3a">but</span><span style="color:#3a9a3a">·</span><span style="color:#3a9a3a">not</span><span style="color:#3a9a3a">·</span><span style="color:#3a9a3a">in</span><span style="color:#3a9a3a">·</span><span style="color:#3a9a3a">F12</span><span style="color:#3a9a3a">·</span><span style="color:#3a9a3a">*/</span></div>
<div class="ln" style="left:9.20px;top:323.32px;color:#8a8a8a">37</div>
<div class="cl" style="left:22.40px;top:323.32px"><span style="color:#2a2a2a">.</span><span style="color:#2a2a2a">B</span><span style="color:#2a2a2a">P</span><span style="color:#2a2a2a">T</span><span style="color:#2a2a2a">-</span><span style="color:#2a2a2a">T</span><span style="color:#2a2a2a">o</span><span style="color:#2a2a2a">o</span><span style="color:#2a2a2a">l</span><span style="color:#2a2a2a">T</span><span style="color:#2a2a2a">i</span><span style="color:#2a2a2a">t</span><span style="color:#2a2a2a">l</span><span style="color:#2a2a2a">e</span><i>·</i><span style="color:#2a2a2a">{</span></div>
<div class="ln" style="left:9.20px;top:331.68px;color:#8a8a8a">38</div>
<div class="cl" style="left:22.40px;top:331.68px"><i>·</i><i>·</i><i>·</i><i>·</i><span style="color:#4646e0">display</span><span style="color:#2a2a2a">:</span><i>·</i><span style="color:#b03a3a">none</span><span style="color:#2a2a2a">;</span></div>
<div class="ln" style="left:9.20px;top:340.04px;color:#8a8a8a">39</div>
<div class="cl" style="left:22.40px;top:340.04px"><span style="color:#2a2a2a">}</span></div>
<div class="ln" style="left:9.20px;top:348.40px;color:#8a8a8a">40</div>
<div class="ln" style="left:9.20px;top:356.76px;color:#8a8a8a">41</div>
<div class="cl" style="left:22.40px;top:356.76px"><span style="color:#3c4ed8">html.hostedF12</span><span style="color:#3c4ed8">·</span><span style="color:#3c4ed8">.BPT-ToolTitle</span><span style="color:#3c4ed8">·</span><span style="color:#3c4ed8">{</span></div>
<div class="ln" style="left:9.20px;top:365.12px;color:#8a8a8a">42</div>
<div class="cl" style="left:22.40px;top:365.12px"><span style="color:#3c4ed8">·</span><span style="color:#3c4ed8">·</span><span style="color:#3c4ed8">·</span><span style="color:#3c4ed8">·</span><span style="color:#3c4ed8">display:</span><span style="color:#3c4ed8">·</span><span style="color:#3c4ed8">inline-block;</span></div>
<div class="ln" style="left:9.20px;top:373.48px;color:#8a8a8a">43</div>
<div class="cl" style="left:22.40px;top:373.48px"><span style="color:#3c4ed8">·</span><span style="color:#3c4ed8">·</span><span style="color:#3c4ed8">·</span><span style="color:#3c4ed8">·</span><span style="color:#3c4ed8">white-space:</span><span style="color:#3c4ed8">·</span><span style="color:#3c4ed8">nowrap;</span></div>
<div class="ln" style="left:9.20px;top:381.84px;color:#8a8a8a">44</div>
<div class="cl" style="left:22.40px;top:381.84px"><span style="color:#3c4ed8">}</span></div>
<div class="ln" style="left:9.20px;top:390.20px;color:#8a8a8a">45</div>
<div class="lbg" style="left:411.70px;top:139.40px;width:340.70px;height:8.410px;background:#c0c0c0"></div>
<div class="lbg" style="left:411.70px;top:140.00px;width:340.70px;height:8.660px;border-top:1px solid #b4c0d8;border-bottom:1px solid #b4c0d8;box-sizing:border-box"></div>
<div class="lbg" style="left:411.70px;top:147.76px;width:340.70px;height:8.410px;background:#c0c0c0"></div>
<div class="lbg" style="left:411.70px;top:156.12px;width:340.70px;height:8.410px;background:#c0c0c0"></div>
<div class="lbg" style="left:411.70px;top:164.48px;width:340.70px;height:8.410px;background:#c0c0c0"></div>
<div class="lbg" style="left:411.70px;top:172.84px;width:340.70px;height:8.410px;background:#c0c0c0"></div>
<div class="lbg" style="left:411.70px;top:181.20px;width:340.70px;height:8.410px;background:#c0c0c0"></div>
<div class="lbg" style="left:411.70px;top:256.44px;width:340.70px;height:8.410px;background:#fcf4c6"></div>
<div class="lbg" style="left:411.70px;top:356.76px;width:340.70px;height:8.410px;background:#dcdcdc"></div>
<div class="lbg" style="left:411.70px;top:365.12px;width:340.70px;height:8.410px;background:#dcdcdc"></div>
<div class="lbg" style="left:411.70px;top:373.48px;width:340.70px;height:8.410px;background:#dcdcdc"></div>
<div class="lbg" style="left:411.70px;top:381.84px;width:340.70px;height:8.410px;background:#dcdcdc"></div>
<div class="lbg" style="left:411.70px;top:390.20px;width:340.70px;height:8.410px;background:#dcdcdc"></div>
<div class="ln" style="left:398.50px;top:97.60px;color:#8a8a8a">16</div>
<div class="cl" style="left:411.70px;top:97.60px"><i>·</i><i>·</i><i>·</i><i>·</i><i>·</i><i>·</i><i>·</i><i>·</i><span style="color:#2a2a2a">-</span><span style="color:#2a2a2a">m</span><span style="color:#2a2a2a">s</span><span style="color:#2a2a2a">-</span><span style="color:#2a2a2a">g</span><span style="color:#2a2a2a">r</span><span style="color:#2a2a2a">i</span><span style="color:#2a2a2a">d</span><span style="color:#2a2a2a">-</span><span style="color:#2a2a2a">c</span><span style="color:#2a2a2a">o</span><span style="color:#2a2a2a">l</span><span style="color:#2a2a2a">u</span><span style="color:#2a2a2a">m</span><span style="color:#2a2a2a">n</span><span style="color:#2a2a2a">:</span><i>·</i><span style="color:#2a2a2a">1</span><span style="color:#2a2a2a">;</span></div>
<div class="ln" style="left:398.50px;top:105.96px;color:#8a8a8a">17</div>
<div class="cl" style="left:411.70px;top:105.96px"><i>·</i><i>·</i><i>·</i><i>·</i><i>·</i><i>·</i><i>·</i><i>·</i><span style="color:#4646e0">margin-top</span><span style="color:#2a2a2a">:</span><i>·</i><span style="color:#b03a3a">1px</span><span style="color:#2a2a2a">;</span></div>
<div class="ln" style="left:398.50px;top:114.32px;color:#8a8a8a">18</div>
<div class="cl" style="left:411.70px;top:114.32px"><i>·</i><i>·</i><i>·</i><i>·</i><i>·</i><i>·</i><i>·</i><i>·</i><span style="color:#4646e0">padding-left</span><span style="color:#2a2a2a">:</span><i>·</i><span style="color:#b03a3a">14px</span><span style="color:#2a2a2a">;</span></div>
<div class="ln" style="left:398.50px;top:122.68px;color:#8a8a8a">19</div>
<div class="cl" style="left:411.70px;top:122.68px"><i>·</i><i>·</i><i>·</i><i>·</i><span style="color:#2a2a2a">}</span></div>
<div class="ln" style="left:398.50px;top:131.04px;color:#8a8a8a">20</div>
<div class="ln" style="left:398.50px;top:139.40px;color:#1e2a88">21</div>
<div class="cl" style="left:411.70px;top:139.40px"><span style="color:#a02c6c">·</span><span style="color:#a02c6c">·</span><span style="color:#a02c6c">·</span><span style="color:#a02c6c">·</span><span style="color:#a02c6c">·</span><span style="color:#a02c6c">·</span><span style="color:#a02c6c">·</span><span style="color:#a02c6c">·</span><span style="color:#a02c6c">.BPT-Toolbar</span><span style="color:#a02c6c">·</span><span style="color:#a02c6c">&gt;</span><span style="color:#a02c6c">·</span><span style="color:#a02c6c">.BPT-ToolbarContents</span><span style="color:#a02c6c">·</span><span style="color:#a02c6c">&gt;</span><span style="color:#a02c6c">·</span><span style="color:#a02c6c">.buttons</span><span style="color:#a02c6c">·</span><span style="color:#a02c6c">{</span></div>
<div class="ln" style="left:398.50px;top:147.76px;color:#8a8a8a">22</div>
<div class="cl" style="left:411.70px;top:147.76px"><span style="color:#a02c6c">·</span><span style="color:#a02c6c">·</span><span style="color:#a02c6c">·</span><span style="color:#a02c6c">·</span><span style="color:#a02c6c">·</span><span style="color:#a02c6c">·</span><span style="color:#a02c6c">·</span><span style="color:#a02c6c">·</span><span style="color:#a02c6c">·</span><span style="color:#a02c6c">·</span><span style="color:#a02c6c">·</span><span style="color:#a02c6c">·</span><span style="color:#a02c6c">display:</span><span style="color:#a02c6c">·</span><span style="color:#a02c6c">inline-block;</span></div>
<div class="ln" style="left:398.50px;top:156.12px;color:#8a8a8a">23</div>
<div class="cl" style="left:411.70px;top:156.12px"><span style="color:#a02c6c">·</span><span style="color:#a02c6c">·</span><span style="color:#a02c6c">·</span><span style="color:#a02c6c">·</span><span style="color:#a02c6c">·</span><span style="color:#a02c6c">·</span><span style="color:#a02c6c">·</span><span style="color:#a02c6c">·</span><span style="color:#a02c6c">·</span><span style="color:#a02c6c">·</span><span style="color:#a02c6c">·</span><span style="color:#a02c6c">·</span><span style="color:#a02c6c">margin-right:</span><span style="color:#a02c6c">·</span><span style="color:#a02c6c">10px;</span></div>
<div class="ln" style="left:398.50px;top:164.48px;color:#8a8a8a">24</div>
<div class="cl" style="left:411.70px;top:164.48px"><span style="color:#a02c6c">·</span><span style="color:#a02c6c">·</span><span style="color:#a02c6c">·</span><span style="color:#a02c6c">·</span><span style="color:#a02c6c">·</span><span style="color:#a02c6c">·</span><span style="color:#a02c6c">·</span><span style="color:#a02c6c">·</span><span style="color:#a02c6c">·</span><span style="color:#a02c6c">·</span><span style="color:#a02c6c">·</span><span style="color:#a02c6c">·</span><span style="color:#a02c6c">white-space:</span><span style="color:#a02c6c">·</span><span style="color:#a02c6c">nowrap;</span></div>
<div class="ln" style="left:398.50px;top:172.84px;color:#8a8a8a">25</div>
<div class="cl" style="left:411.70px;top:172.84px"><span style="color:#a02c6c">·</span><span style="color:#a02c6c">·</span><span style="color:#a02c6c">·</span><span style="color:#a02c6c">·</span><span style="color:#a02c6c">·</span><span style="color:#a02c6c">·</span><span style="color:#a02c6c">·</span><span style="color:#a02c6c">·</span><span style="color:#a02c6c">}</span></div>
<div class="ln" style="left:398.50px;top:181.20px;color:#8a8a8a">26</div>
<div class="ln" style="left:398.50px;top:189.56px;color:#8a8a8a">27</div>
<div class="cl" style="left:411.70px;top:189.56px"><i>·</i><i>·</i><i>·</i><i>·</i><i>·</i><i>·</i><i>·</i><i>·</i><span style="color:#2a2a2a">.</span><span style="color:#2a2a2a">B</span><span style="color:#2a2a2a">P</span><span style="color:#2a2a2a">T</span><span style="color:#2a2a2a">-</span><span style="color:#2a2a2a">T</span><span style="color:#2a2a2a">o</span><span style="color:#2a2a2a">o</span><span style="color:#2a2a2a">l</span><span style="color:#2a2a2a">b</span><span style="color:#2a2a2a">a</span><span style="color:#2a2a2a">r</span><i>·</i><span style="color:#2a2a2a">&gt;</span><i>·</i><span style="color:#2a2a2a">.</span><span style="color:#2a2a2a">B</span><span style="color:#2a2a2a">P</span><span style="color:#2a2a2a">T</span><span style="color:#2a2a2a">-</span><span style="color:#2a2a2a">T</span><span style="color:#2a2a2a">o</span><span style="color:#2a2a2a">o</span><span style="color:#2a2a2a">l</span><span style="color:#2a2a2a">b</span><span style="color:#2a2a2a">a</span><span style="color:#2a2a2a">r</span><span style="color:#2a2a2a">C</span><span style="color:#2a2a2a">o</span><span style="color:#2a2a2a">n</span><span style="color:#2a2a2a">t</span><span style="color:#2a2a2a">e</span><span style="color:#2a2a2a">n</span><span style="color:#2a2a2a">t</span><span style="color:#2a2a2a">s</span><i>·</i><span style="color:#2a2a2a">&gt;</span><i>·</i><span style="color:#2a2a2a">.</span><span style="color:#2a2a2a">B</span><span style="color:#2a2a2a">P</span><span style="color:#2a2a2a">T</span><span style="color:#2a2a2a">-</span><span style="color:#2a2a2a">T</span><span style="color:#2a2a2a">o</span><span style="color:#2a2a2a">o</span><span style="color:#2a2a2a">l</span><span style="color:#2a2a2a">T</span><span style="color:#2a2a2a">i</span><span style="color:#2a2a2a">t</span><span style="color:#2a2a2a">l</span><span style="color:#2a2a2a">e</span><i>·</i><span style="color:#2a2a2a">{</span></div>
<div class="ln" style="left:398.50px;top:197.92px;color:#8a8a8a">28</div>
<div class="cl" style="left:411.70px;top:197.92px"><i>·</i><i>·</i><i>·</i><i>·</i><i>·</i><i>·</i><i>·</i><i>·</i><i>·</i><i>·</i><i>·</i><i>·</i><span style="color:#4646e0">font-family</span><span style="color:#2a2a2a">:</span><i>·</i><span style="color:#b03a3a">&quot;Segoe</span><span style="color:#b03a3a">·</span><span style="color:#b03a3a">UI&quot;,</span><span style="color:#b03a3a">·</span><span style="color:#b03a3a">Arial,</span><span style="color:#b03a3a">·</span><span style="color:#b03a3a">sans-serif</span><span style="color:#2a2a2a">;</span><i>·</i><span style="color:#3a9a3a">/*[{plugin-font-family}</span><span style="color:#3a9a3a">·</span><span style="color:#3a9a3a">,</span><span style="color:#3a9a3a">·</span></div>
<div class="ln" style="left:398.50px;top:206.28px;color:#8a8a8a">29</div>
<div class="cl" style="left:411.70px;top:206.28px"><i>·</i><i>·</i><i>·</i><i>·</i><i>·</i><i>·</i><i>·</i><i>·</i><i>·</i><i>·</i><i>·</i><i>·</i><span style="color:#2a2a2a">f</span><span style="color:#2a2a2a">o</span><span style="color:#2a2a2a">n</span><span style="color:#2a2a2a">t</span><span style="color:#2a2a2a">-</span><span style="color:#2a2a2a">s</span><span style="color:#2a2a2a">i</span><span style="color:#2a2a2a">z</span><span style="color:#2a2a2a">e</span><span style="color:#2a2a2a">:</span><i>·</i><span style="color:#2a2a2a">2</span><span style="color:#2a2a2a">0</span><span style="color:#2a2a2a">p</span><span style="color:#2a2a2a">x</span><span style="color:#2a2a2a">;</span></div>
<div class="ln" style="left:398.50px;top:214.64px;color:#8a8a8a">30</div>
<div class="cl" style="left:411.70px;top:214.64px"><i>·</i><i>·</i><i>·</i><i>·</i><i>·</i><i>·</i><i>·</i><i>·</i><i>·</i><i>·</i><i>·</i><i>·</i><span style="color:#2a2a2a">f</span><span style="color:#2a2a2a">o</span><span style="color:#2a2a2a">n</span><span style="color:#2a2a2a">t</span><span style="color:#2a2a2a">-</span><span style="color:#2a2a2a">w</span><span style="color:#2a2a2a">e</span><span style="color:#2a2a2a">i</span><span style="color:#2a2a2a">g</span><span style="color:#2a2a2a">h</span><span style="color:#2a2a2a">t</span><span style="color:#2a2a2a">:</span><i>·</i><span style="color:#2a2a2a">2</span><span style="color:#2a2a2a">0</span><span style="color:#2a2a2a">0</span><span style="color:#2a2a2a">;</span></div>
<div class="ln" style="left:398.50px;top:223.00px;color:#8a8a8a">31</div>
<div class="cl" style="left:411.70px;top:223.00px"><i>·</i><i>·</i><i>·</i><i>·</i><i>·</i><i>·</i><i>·</i><i>·</i><i>·</i><i>·</i><i>·</i><i>·</i><span style="color:#2a2a2a">p</span><span style="color:#2a2a2a">a</span><span style="color:#2a2a2a">d</span><span style="color:#2a2a2a">d</span><span style="color:#2a2a2a">i</span><span style="color:#2a2a2a">n</span><span style="color:#2a2a2a">g</span><span style="color:#2a2a2a">-</span><span style="color:#2a2a2a">r</span><span style="color:#2a2a2a">i</span><span style="color:#2a2a2a">g</span><span style="color:#2a2a2a">h</span><span style="color:#2a2a2a">t</span><span style="color:#2a2a2a">:</span><i>·</i><span style="color:#2a2a2a">4</span><span style="color:#2a2a2a">2</span><span style="color:#2a2a2a">p</span><span style="color:#2a2a2a">x</span><span style="color:#2a2a2a">;</span></div>
<div class="ln" style="left:398.50px;top:231.36px;color:#8a8a8a">32</div>
<div class="cl" style="left:411.70px;top:231.36px"><i>·</i><i>·</i><i>·</i><i>·</i><i>·</i><i>·</i><i>·</i><i>·</i><i>·</i><i>·</i><i>·</i><i>·</i><span style="color:#2a2a2a">l</span><span style="color:#2a2a2a">i</span><span style="color:#2a2a2a">n</span><span style="color:#2a2a2a">e</span><span style="color:#2a2a2a">-</span><span style="color:#2a2a2a">h</span><span style="color:#2a2a2a">e</span><span style="color:#2a2a2a">i</span><span style="color:#2a2a2a">g</span><span style="color:#2a2a2a">h</span><span style="color:#2a2a2a">t</span><span style="color:#2a2a2a">:</span><i>·</i><span style="color:#2a2a2a">2</span><span style="color:#2a2a2a">9</span><span style="color:#2a2a2a">p</span><span style="color:#2a2a2a">x</span><span style="color:#2a2a2a">;</span></div>
<div class="ln" style="left:398.50px;top:239.72px;color:#8a8a8a">33</div>
<div class="cl" style="left:411.70px;top:239.72px"><i>·</i><i>·</i><i>·</i><i>·</i><i>·</i><i>·</i><i>·</i><i>·</i><span style="color:#2a2a2a">}</span></div>
<div class="ln" style="left:398.50px;top:248.08px;color:#8a8a8a">34</div>
<div class="ln" style="left:398.50px;top:256.44px;color:#8a8a8a">35</div>
<div class="cl" style="left:411.70px;top:256.44px"><span style="color:#3a4838">·</span><span style="color:#3a4838">·</span><span style="color:#3a4838">·</span><span style="color:#3a4838">·</span><span style="color:#3a4838">·</span><span style="color:#3a4838">·</span><span style="color:#3a4838">·</span><span style="color:#3a4838">·</span><span style="color:#3a4838">.</span><span style="color:#3a4838">B</span><span style="color:#3a4838">P</span><span style="color:#3a4838">T</span><span style="color:#3a4838">-</span><b class="ih"><span style="color:#a046dc">Toolbar2</span></b><span style="color:#3a4838">·</span><span style="color:#3a4838">&gt;</span><span style="color:#3a4838">·</span><span style="color:#3a4838">.</span><span style="color:#3a4838">B</span><span style="color:#3a4838">P</span><span style="color:#3a4838">T</span><span style="color:#3a4838">-</span><span style="color:#3a4838">T</span><span style="color:#3a4838">o</span><span style="color:#3a4838">o</span><span style="color:#3a4838">l</span><span style="color:#3a4838">b</span><span style="color:#3a4838">a</span><span style="color:#3a4838">r</span><span style="color:#3a4838">C</span><span style="color:#3a4838">o</span><span style="color:#3a4838">n</span><span style="color:#3a4838">t</span><span style="color:#3a4838">e</span><span style="color:#3a4838">n</span><span style="color:#3a4838">t</span><span style="color:#3a4838">s</span><span style="color:#3a4838">·</span><span style="color:#3a4838">&gt;</span><span style="color:#3a4838">·</span><span style="color:#3a4838">.</span><span style="color:#3a4838">s</span><span style="color:#3a4838">h</span><span style="color:#3a4838">e</span><span style="color:#3a4838">l</span><span style="color:#3a4838">l</span><span style="color:#3a4838">B</span><span style="color:#3a4838">u</span><span style="color:#3a4838">t</span><span style="color:#3a4838">t</span><span style="color:#3a4838">o</span><span style="color:#3a4838">n</span><span style="color:#3a4838">S</span><span style="color:#3a4838">p</span><span style="color:#3a4838">a</span><span style="color:#3a4838">c</span><span style="color:#3a4838">e</span><span style="color:#3a4838">r</span><span style="color:#3a4838">·</span><span style="color:#3a4838">{</span></div>
<div class="ln" style="left:398.50px;top:264.80px;color:#8a8a8a">36</div>
<div class="cl" style="left:411.70px;top:264.80px"><i>·</i><i>·</i><i>·</i><i>·</i><i>·</i><i>·</i><i>·</i><i>·</i><i>·</i><i>·</i><i>·</i><i>·</i><span style="color:#4646e0">display</span><span style="color:#2a2a2a">:</span><i>·</i><span style="color:#b03a3a">inline-block</span><span style="color:#2a2a2a">;</span></div>
<div class="ln" style="left:398.50px;top:273.16px;color:#8a8a8a">37</div>
<div class="cl" style="left:411.70px;top:273.16px"><i>·</i><i>·</i><i>·</i><i>·</i><i>·</i><i>·</i><i>·</i><i>·</i><i>·</i><i>·</i><i>·</i><i>·</i><span style="color:#4646e0">float</span><span style="color:#2a2a2a">:</span><i>·</i><span style="color:#b03a3a">right</span><span style="color:#2a2a2a">;</span></div>
<div class="ln" style="left:398.50px;top:281.52px;color:#8a8a8a">38</div>
<div class="cl" style="left:411.70px;top:281.52px"><i>·</i><i>·</i><i>·</i><i>·</i><i>·</i><i>·</i><i>·</i><i>·</i><i>·</i><i>·</i><i>·</i><i>·</i><span style="color:#4646e0">height</span><span style="color:#2a2a2a">:</span><i>·</i><span style="color:#b03a3a">29px</span><span style="color:#2a2a2a">;</span></div>
<div class="ln" style="left:398.50px;top:289.88px;color:#8a8a8a">39</div>
<div class="cl" style="left:411.70px;top:289.88px"><i>·</i><i>·</i><i>·</i><i>·</i><i>·</i><i>·</i><i>·</i><i>·</i><i>·</i><i>·</i><i>·</i><i>·</i><span style="color:#4646e0">width</span><span style="color:#2a2a2a">:</span><i>·</i><span style="color:#b03a3a">0</span><span style="color:#2a2a2a">;</span><i>·</i><span style="color:#3a9a3a">/*</span><span style="color:#3a9a3a">·</span><span style="color:#3a9a3a">0</span><span style="color:#3a9a3a">·</span><span style="color:#3a9a3a">is</span><span style="color:#3a9a3a">·</span><span style="color:#3a9a3a">replaced</span><span style="color:#3a9a3a">·</span><span style="color:#3a9a3a">during</span><span style="color:#3a9a3a">·</span><span style="color:#3a9a3a">&#x27;hostinfochanged&#x27;</span><span style="color:#3a9a3a">·</span><span style="color:#3a9a3a">events</span><span style="color:#3a9a3a">·</span><span style="color:#3a9a3a">*/</span></div>
<div class="ln" style="left:398.50px;top:298.24px;color:#8a8a8a">40</div>
<div class="cl" style="left:411.70px;top:298.24px"><i>·</i><i>·</i><i>·</i><i>·</i><i>·</i><i>·</i><i>·</i><i>·</i><span style="color:#2a2a2a">}</span></div>
<div class="ln" style="left:398.50px;top:306.60px;color:#8a8a8a">41</div>
<div class="ln" style="left:398.50px;top:314.96px;color:#8a8a8a">42</div>
<div class="cl" style="left:411.70px;top:314.96px"><span style="color:#3a9a3a">/*</span><span style="color:#3a9a3a">·</span><span style="color:#3a9a3a">Hide</span><span style="color:#3a9a3a">·</span><span style="color:#3a9a3a">the</span><span style="color:#3a9a3a">·</span><span style="color:#3a9a3a">tool</span><span style="color:#3a9a3a">·</span><span style="color:#3a9a3a">title</span><span style="color:#3a9a3a">·</span><span style="color:#3a9a3a">in</span><span style="color:#3a9a3a">·</span><span style="color:#3a9a3a">VS</span><span style="color:#3a9a3a">·</span><span style="color:#3a9a3a">but</span><span style="color:#3a9a3a">·</span><span style="color:#3a9a3a">not</span><span style="color:#3a9a3a">·</span><span style="color:#3a9a3a">in</span><span style="color:#3a9a3a">·</span><span style="color:#3a9a3a">F12</span><span style="color:#3a9a3a">·</span><span style="color:#3a9a3a">*/</span></div>
<div class="ln" style="left:398.50px;top:323.32px;color:#8a8a8a">43</div>
<div class="cl" style="left:411.70px;top:323.32px"><span style="color:#2a2a2a">.</span><span style="color:#2a2a2a">B</span><span style="color:#2a2a2a">P</span><span style="color:#2a2a2a">T</span><span style="color:#2a2a2a">-</span><span style="color:#2a2a2a">T</span><span style="color:#2a2a2a">o</span><span style="color:#2a2a2a">o</span><span style="color:#2a2a2a">l</span><span style="color:#2a2a2a">T</span><span style="color:#2a2a2a">i</span><span style="color:#2a2a2a">t</span><span style="color:#2a2a2a">l</span><span style="color:#2a2a2a">e</span><i>·</i><span style="color:#2a2a2a">{</span></div>
<div class="ln" style="left:398.50px;top:331.68px;color:#8a8a8a">44</div>
<div class="cl" style="left:411.70px;top:331.68px"><i>·</i><i>·</i><i>·</i><i>·</i><span style="color:#4646e0">display</span><span style="color:#2a2a2a">:</span><i>·</i><span style="color:#b03a3a">none</span><span style="color:#2a2a2a">;</span></div>
<div class="ln" style="left:398.50px;top:340.04px;color:#8a8a8a">45</div>
<div class="cl" style="left:411.70px;top:340.04px"><span style="color:#2a2a2a">}</span></div>
<div class="ln" style="left:398.50px;top:348.40px;color:#8a8a8a">46</div>
<div style="left:0.00px;top:408px;width:377.2px;height:12.6px;background:#f2f2f2;border:1px solid #d6d9e2"></div>
<div class="t" style="left:1.50px;top:411.51px;font-size:8.20px;line-height:9.43px;color:#1e1e1e;transform:scaleX(0.8301);transform-origin:0 0;">Ln 22, Col 20</div>
<div class="t" style="left:102.00px;top:411.51px;font-size:8.20px;line-height:9.43px;color:#1e1e1e;transform:scaleX(0.8354);transform-origin:0 0;">92 lines</div>
<div class="t" style="left:147.00px;top:411.51px;font-size:8.20px;line-height:9.43px;color:#1e1e1e;transform:scaleX(0.8496);transform-origin:0 0;">INS</div>
<div class="t" style="left:167.20px;top:411.51px;font-size:8.20px;line-height:9.43px;color:#8c8c8c;transform:scaleX(0.8585);transform-origin:0 0;">Read-only</div>
<div class="t" style="left:207.00px;top:411.51px;font-size:8.20px;line-height:9.43px;color:#1e1e1e;transform:scaleX(0.8696);transform-origin:0 0;">Edit</div>
<div class="t" style="left:225.30px;top:411.51px;font-size:8.20px;line-height:9.43px;color:#8c8c8c;transform:scaleX(0.8887);transform-origin:0 0;">Plug-in</div>
<div style="left:255.00px;top:409.80px;width:74.60px;height:9.80px;background:#c6e6fb;"></div>
<div class="t" style="left:256.70px;top:411.51px;font-size:8.20px;line-height:9.43px;color:#6a48d0;transform:scaleX(0.8244);transform-origin:0 0;">11/29/2021 1:34:39 PM</div>
<div class="t" style="left:332.30px;top:411.51px;font-size:8.20px;line-height:9.43px;color:#1e1e1e;transform:scaleX(0.7805);transform-origin:0 0;">2.2 KB</div>
<div class="t" style="left:357.70px;top:411.51px;font-size:8.20px;line-height:9.43px;color:#1e1e1e;transform:scaleX(0.8147);transform-origin:0 0;">ANSI</div>
<div style="left:98.60px;top:409.00px;width:0.90px;height:11.20px;background:#dcdde2;"></div>
<div style="left:143.70px;top:409.00px;width:0.90px;height:11.20px;background:#dcdde2;"></div>
<div style="left:163.70px;top:409.00px;width:0.90px;height:11.20px;background:#dcdde2;"></div>
<div style="left:203.60px;top:409.00px;width:0.90px;height:11.20px;background:#dcdde2;"></div>
<div style="left:221.10px;top:409.00px;width:0.90px;height:11.20px;background:#dcdde2;"></div>
<div style="left:252.40px;top:409.00px;width:0.90px;height:11.20px;background:#dcdde2;"></div>
<div style="left:329.90px;top:409.00px;width:0.90px;height:11.20px;background:#dcdde2;"></div>
<div style="left:354.00px;top:409.00px;width:0.90px;height:11.20px;background:#dcdde2;"></div>
<div style="left:389.30px;top:408px;width:377.2px;height:12.6px;background:#f2f2f2;border:1px solid #d6d9e2"></div>
<div class="t" style="left:390.40px;top:411.51px;font-size:8.20px;line-height:9.43px;color:#1e1e1e;transform:scaleX(0.8251);transform-origin:0 0;">Ln 21, Col 9</div>
<div class="t" style="left:492.00px;top:411.51px;font-size:8.20px;line-height:9.43px;color:#1e1e1e;transform:scaleX(0.8283);transform-origin:0 0;">93 lines</div>
<div class="t" style="left:536.30px;top:411.51px;font-size:8.20px;line-height:9.43px;color:#1e1e1e;transform:scaleX(0.8496);transform-origin:0 0;">INS</div>
<div class="t" style="left:556.50px;top:411.51px;font-size:8.20px;line-height:9.43px;color:#8c8c8c;transform:scaleX(0.8585);transform-origin:0 0;">Read-only</div>
<div class="t" style="left:596.30px;top:411.51px;font-size:8.20px;line-height:9.43px;color:#1e1e1e;transform:scaleX(0.8696);transform-origin:0 0;">Edit</div>
<div class="t" style="left:614.60px;top:411.51px;font-size:8.20px;line-height:9.43px;color:#8c8c8c;transform:scaleX(0.8887);transform-origin:0 0;">Plug-in</div>
<div style="left:644.30px;top:409.80px;width:75.60px;height:9.80px;background:#c8ecd0;"></div>
<div class="t" style="left:646.10px;top:411.51px;font-size:8.20px;line-height:9.43px;color:#c84848;transform:scaleX(0.8303);transform-origin:0 0;">11/29/2021 1:34:38 PM</div>
<div class="t" style="left:722.70px;top:411.51px;font-size:8.20px;line-height:9.43px;color:#1e1e1e;transform:scaleX(0.7805);transform-origin:0 0;">2.3 KB</div>
<div class="t" style="left:747.60px;top:411.51px;font-size:8.20px;line-height:9.43px;color:#1e1e1e;transform:scaleX(0.8095);transform-origin:0 0;">ANSI</div>
<div style="left:487.90px;top:409.00px;width:0.90px;height:11.20px;background:#dcdde2;"></div>
<div style="left:533.00px;top:409.00px;width:0.90px;height:11.20px;background:#dcdde2;"></div>
<div style="left:553.00px;top:409.00px;width:0.90px;height:11.20px;background:#dcdde2;"></div>
<div style="left:592.90px;top:409.00px;width:0.90px;height:11.20px;background:#dcdde2;"></div>
<div style="left:610.40px;top:409.00px;width:0.90px;height:11.20px;background:#dcdde2;"></div>
<div style="left:641.70px;top:409.00px;width:0.90px;height:11.20px;background:#dcdde2;"></div>
<div style="left:719.20px;top:409.00px;width:0.90px;height:11.20px;background:#dcdde2;"></div>
<div style="left:743.30px;top:409.00px;width:0.90px;height:11.20px;background:#dcdde2;"></div>
<div style="left:0.00px;top:420.40px;width:768.00px;height:31.40px;background:#d3d7e3;"></div>
<div style="left:0.80px;top:422.50px;width:6.60px;height:8.30px;background:#fafafa;"></div>
<div style="left:8.30px;top:422.50px;width:14.00px;height:8.30px;background:#f8f8f8;"></div>
<div style="left:22.60px;top:422.50px;width:745.40px;height:8.30px;background:#c0c0c0;"></div>
<div style="left:0.80px;top:432.20px;width:6.60px;height:8.30px;background:#fafafa;"></div>
<div style="left:8.30px;top:432.20px;width:14.00px;height:8.30px;background:#f8f8f8;"></div>
<div style="left:22.60px;top:432.20px;width:745.40px;height:8.30px;background:#c0c0c0;"></div>
<svg style="left:1.00px;top:424.00px" width="6.40" height="5.40" viewBox="0 0 10 8"><defs><radialGradient id="ga" cx=".55" cy=".5" r=".5"><stop offset="0" stop-color="#8ee88e"/><stop offset="1" stop-color="#28a828"/></radialGradient></defs><path d="M0.4 1.8 H4.6 V0.2 L9.7 4 L4.6 7.8 V6.2 H0.4Z" fill="url(#ga)" stroke="#229a22" stroke-width=".6" stroke-linejoin="round"/></svg>
<svg style="left:1.00px;top:433.60px" width="6.40" height="5.40" viewBox="0 0 10 8"><defs><radialGradient id="gb" cx=".45" cy=".5" r=".5"><stop offset="0" stop-color="#8ee88e"/><stop offset="1" stop-color="#28a828"/></radialGradient></defs><path d="M9.6 1.8 H5.4 V0.2 L0.3 4 L5.4 7.8 V6.2 H9.6Z" fill="url(#gb)" stroke="#229a22" stroke-width=".6" stroke-linejoin="round"/></svg>
<div class="ln" style="left:9.2px;top:431.30px;color:#8a8a8a">21</div>
<div class="cl" style="left:22.4px;top:431.30px"><span style="color:#a02c6c">·</span><span style="color:#a02c6c">·</span><span style="color:#a02c6c">·</span><span style="color:#a02c6c">·</span><span style="color:#a02c6c">·</span><span style="color:#a02c6c">·</span><span style="color:#a02c6c">·</span><span style="color:#a02c6c">·</span><span style="color:#a02c6c">.BPT-Toolbar</span><span style="color:#a02c6c">·</span><span style="color:#a02c6c">&gt;</span><span style="color:#a02c6c">·</span><span style="color:#a02c6c">.BPT-ToolbarContents</span><span style="color:#a02c6c">·</span><span style="color:#a02c6c">&gt;</span><span style="color:#a02c6c">·</span><span style="color:#a02c6c">.buttons</span><span style="color:#a02c6c">·</span><span style="color:#a02c6c">{</span></div>
<div style="left:0.00px;top:441.90px;width:768.00px;height:9.60px;background:#f0f0f0;"></div>
<svg style="left:2.10px;top:443.60px" width="4" height="6"><path d="M3.4 0.6 L1 3 L3.4 5.4" fill="none" stroke="#a8a8a8" stroke-width="1.2"/></svg>
<svg style="left:760.90px;top:443.60px" width="4" height="6"><path d="M1 0.6 L3.4 3 L1 5.4" fill="none" stroke="#a8a8a8" stroke-width="1.2"/></svg>
<div style="left:0.00px;top:451.60px;width:768.00px;height:90.40px;background:#2d3c5c;"></div>
<div style="left:0.00px;top:453.90px;width:675.30px;height:11.80px;background:#4a5d80;"></div>
<div class="t" style="left:2.80px;top:456.26px;font-size:8.00px;line-height:9.20px;color:#eef0f6;transform:scaleX(0.9208);transform-origin:0 0;">Output</div>
<div style="left:0.00px;top:465.70px;width:675.30px;height:76.30px;background:#ffffff;"></div>
<div style="left:0.00px;top:534.60px;width:666.50px;height:7.40px;background:#f2f2f2;"></div>
<svg style="left:657.40px;top:535.20px" width="4" height="6"><path d="M1 0.6 L3.4 3 L1 5.4" fill="none" stroke="#b0b0b0" stroke-width="1.2"/></svg>
<svg style="left:2.10px;top:535.40px" width="4" height="6"><path d="M3.4 0.6 L1 3 L3.4 5.4" fill="none" stroke="#b0b0b0" stroke-width="1.2"/></svg>
<div style="left:666.50px;top:465.70px;width:8.80px;height:76.30px;background:#f0f0f0;"></div>
<div style="left:666.70px;top:506.50px;width:8.40px;height:16.50px;background:#c0c0c0;"></div>
<svg style="left:668.00px;top:468.80px" width="6" height="4"><path d="M0.6 3.4 L3 1 L5.4 3.4" fill="none" stroke="#555" stroke-width="1.2"/></svg>
<svg style="left:668.00px;top:526.20px" width="6" height="4"><path d="M0.6 1 L3 3.4 L5.4 1" fill="none" stroke="#555" stroke-width="1.2"/></svg>
<div class="t" style="left:-0.60px;top:466.26px;font-size:8.00px;line-height:9.20px;color:#3030f0;transform:scaleX(0.8575);transform-origin:0 0;-webkit-text-stroke:0.12px currentColor;">3/27/2022 2:39:44 PM</div>
<div class="t" style="left:79.50px;top:466.26px;font-size:8.00px;line-height:9.20px;color:#3030f0;transform:scaleX(0.9397);transform-origin:0 0;-webkit-text-stroke:0.12px currentColor;">Action</div>
<div class="t" style="left:114.70px;top:466.26px;font-size:8.00px;line-height:9.20px;color:#3030f0;transform:scaleX(0.8877);transform-origin:0 0;-webkit-text-stroke:0.12px currentColor;">Comparing file 'C:\Src\ExamDiff\Specs\TreeSitter Support\Tests\1.js' and file 'C:\Src\ExamDiff\Specs\TreeSitter Support\Tests\2.js' ...</div>
<div class="t" style="left:-0.60px;top:475.20px;font-size:8.00px;line-height:9.20px;color:#3030f0;transform:scaleX(0.8575);transform-origin:0 0;-webkit-text-stroke:0.12px currentColor;">3/27/2022 2:39:45 PM</div>
<div class="t" style="left:79.50px;top:475.20px;font-size:8.00px;line-height:9.20px;color:#3030f0;transform:scaleX(0.9397);transform-origin:0 0;-webkit-text-stroke:0.12px currentColor;">Action</div>
<div class="t" style="left:114.70px;top:475.20px;font-size:8.00px;line-height:9.20px;color:#3030f0;transform:scaleX(0.8869);transform-origin:0 0;-webkit-text-stroke:0.12px currentColor;">Compared file 'C:\Src\ExamDiff\Specs\TreeSitter Support\Tests\1.js' and file 'C:\Src\ExamDiff\Specs\TreeSitter Support\Tests\2.js'</div>
<div class="t" style="left:-0.60px;top:484.14px;font-size:8.00px;line-height:9.20px;color:#303030;transform:scaleX(0.8575);transform-origin:0 0;-webkit-text-stroke:0.12px currentColor;">3/27/2022 2:39:45 PM</div>
<div class="t" style="left:79.50px;top:484.14px;font-size:8.00px;line-height:9.20px;color:#303030;transform:scaleX(0.8321);transform-origin:0 0;-webkit-text-stroke:0.12px currentColor;">Results</div>
<div class="t" style="left:114.70px;top:484.14px;font-size:8.00px;line-height:9.20px;color:#303030;transform:scaleX(0.8766);transform-origin:0 0;-webkit-text-stroke:0.12px currentColor;">4 differences: 41 lines, 1 inline difference in 1 changed line</div>
<div class="t" style="left:-0.60px;top:493.08px;font-size:8.00px;line-height:9.20px;color:#3030f0;transform:scaleX(0.8575);transform-origin:0 0;-webkit-text-stroke:0.12px currentColor;">3/27/2022 2:39:49 PM</div>
<div class="t" style="left:79.50px;top:493.08px;font-size:8.00px;line-height:9.20px;color:#3030f0;transform:scaleX(0.9397);transform-origin:0 0;-webkit-text-stroke:0.12px currentColor;">Action</div>
<div class="t" style="left:114.70px;top:493.08px;font-size:8.00px;line-height:9.20px;color:#3030f0;transform:scaleX(0.8859);transform-origin:0 0;-webkit-text-stroke:0.12px currentColor;">Comparing file 'C:\Src\ExamDiff\Specs\TreeSitter Support\Tests\1.css' and file 'C:\Src\ExamDiff\Specs\TreeSitter Support\Tests\2.css' ...</div>
<div class="t" style="left:-0.60px;top:502.02px;font-size:8.00px;line-height:9.20px;color:#3030f0;transform:scaleX(0.8575);transform-origin:0 0;-webkit-text-stroke:0.12px currentColor;">3/27/2022 2:39:50 PM</div>
<div class="t" style="left:79.50px;top:502.02px;font-size:8.00px;line-height:9.20px;color:#3030f0;transform:scaleX(0.9397);transform-origin:0 0;-webkit-text-stroke:0.12px currentColor;">Action</div>
<div class="t" style="left:114.70px;top:502.02px;font-size:8.00px;line-height:9.20px;color:#3030f0;transform:scaleX(0.8843);transform-origin:0 0;-webkit-text-stroke:0.12px currentColor;">Compared file 'C:\Src\ExamDiff\Specs\TreeSitter Support\Tests\1.css' and file 'C:\Src\ExamDiff\Specs\TreeSitter Support\Tests\2.css'</div>
<div class="t" style="left:-0.60px;top:510.96px;font-size:8.00px;line-height:9.20px;color:#303030;transform:scaleX(0.8575);transform-origin:0 0;-webkit-text-stroke:0.12px currentColor;">3/27/2022 2:39:50 PM</div>
<div class="t" style="left:79.50px;top:510.96px;font-size:8.00px;line-height:9.20px;color:#303030;transform:scaleX(0.8321);transform-origin:0 0;-webkit-text-stroke:0.12px currentColor;">Results</div>
<div class="t" style="left:114.70px;top:510.96px;font-size:8.00px;line-height:9.20px;color:#303030;transform:scaleX(0.8766);transform-origin:0 0;-webkit-text-stroke:0.12px currentColor;">3 differences: 12 lines, 1 inline difference in 1 changed line</div>
<svg style="left:645.30px;top:458.3px" width="6" height="4"><path d="M0 0 H6 L3 3.5Z" fill="#f0f2f8"/></svg>
<svg style="left:654.50px;top:455.6px" width="6" height="9" viewBox="0 0 6 9"><path d="M1.5 0.5 H4.5 V4.5 H5.5 V5.5 H0.5 V4.5 H1.5Z M3 5.5 V8.8" fill="none" stroke="#f0f2f8" stroke-width="1"/><rect x="3.2" y="1" width="1" height="3.5" fill="#f0f2f8"/></svg>
<svg style="left:664.00px;top:456.5px" width="7" height="7"><path d="M0.5 0.5 L6.5 6.5 M6.5 0.5 L0.5 6.5" stroke="#f0f2f8" stroke-width="1.4"/></svg>
<div style="left:678.5px;top:453.9px;width:89.5px;height:11.8px;background:#4a5d80;border:1px solid #7a8cac;border-bottom:none"></div>
<div class="t" style="left:680.80px;top:456.26px;font-size:8.00px;line-height:9.20px;color:#eef0f6;transform:scaleX(0.8594);transform-origin:0 0;">Statistics</div>
<svg style="left:737.80px;top:458.3px" width="6" height="4"><path d="M0 0 H6 L3 3.5Z" fill="#f0f2f8"/></svg>
<svg style="left:747.00px;top:455.6px" width="6" height="9" viewBox="0 0 6 9"><path d="M1.5 0.5 H4.5 V4.5 H5.5 V5.5 H0.5 V4.5 H1.5Z M3 5.5 V8.8" fill="none" stroke="#f0f2f8" stroke-width="1"/><rect x="3.2" y="1" width="1" height="3.5" fill="#f0f2f8"/></svg>
<svg style="left:756.50px;top:456.5px" width="7" height="7"><path d="M0.5 0.5 L6.5 6.5 M6.5 0.5 L0.5 6.5" stroke="#f0f2f8" stroke-width="1.4"/></svg>
<div style="left:678.5px;top:465.7px;width:89px;height:76.3px;background:#ffffff;border-left:1px solid #d8dccc;border-top:1px solid #d8dccc"></div>
<div style="left:767.00px;top:465.70px;width:1.00px;height:76.30px;background:#2d3c5c;"></div>
<svg style="left:690px;top:470px" width="70" height="70" viewBox="0 0 70 70"><defs><linearGradient id="pg" x1="0" x2="1" y1="0" y2="0"><stop offset="0" stop-color="#383838"/><stop offset="1" stop-color="#000"/></linearGradient></defs><circle cx="33.10" cy="35.40" r="26.60" fill="url(#pg)"/><path d="M33.10 35.40 L59.70 35.63 A26.60 26.60 0 0 1 59.65 37.02 Z" fill="#5a9a7a" stroke="#e8e8f0" stroke-width=".35"/><path d="M33.10 35.40 L59.65 37.02 A26.60 26.60 0 0 1 57.66 45.62 Z" fill="#1030f0" stroke="#e8e8f0" stroke-width=".35"/><path d="M33.10 35.40 L57.66 45.62 A26.60 26.60 0 0 1 52.17 53.94 Z" fill="#902060" stroke="#e8e8f0" stroke-width=".35"/></svg></body></html>
